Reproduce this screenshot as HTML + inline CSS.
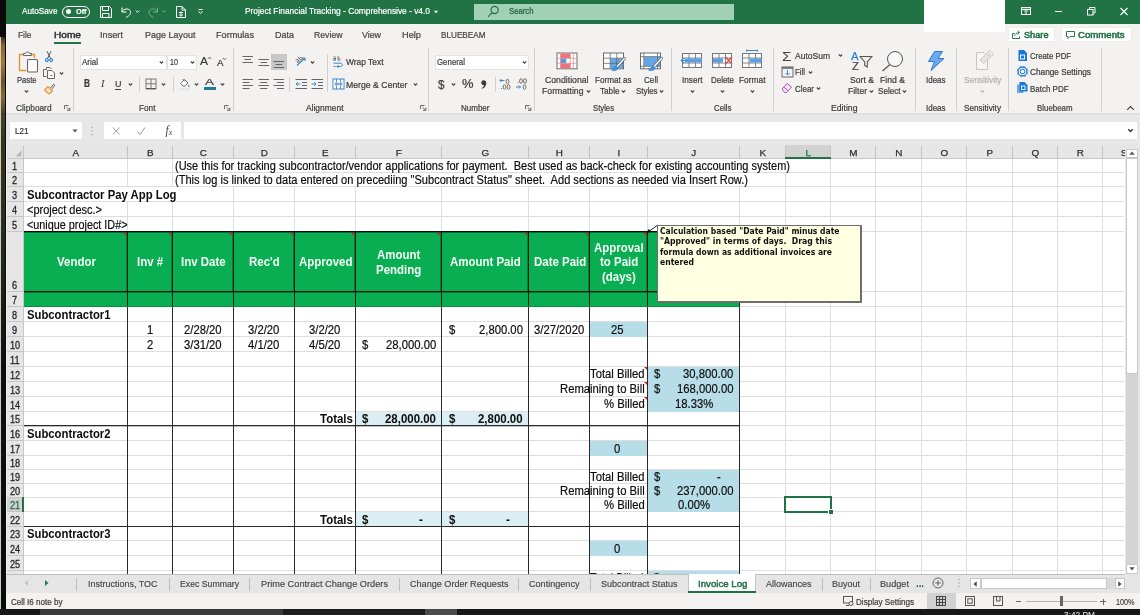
<!DOCTYPE html>
<html lang="en"><head><meta charset="utf-8"><title>Project Financial Tracking - Comprehensive - v4.0 - Excel</title>
<style>
html,body{margin:0;padding:0;}
body{width:1140px;height:615px;overflow:hidden;position:relative;background:#fff;font-family:"Liberation Sans",sans-serif;}
#root{position:absolute;left:0;top:0;width:1140px;height:615px;overflow:hidden;will-change:transform;}
#root div,#root svg{position:absolute;box-sizing:border-box;}
.t{position:absolute;white-space:pre;line-height:1;transform-origin:0 50%;}
</style></head>
<body>
<div id="root">
<!-- worksheet -->
<div style="left:6px;top:145px;width:1134px;height:430px;background:#fff;"></div>
<div style="left:6px;top:145px;width:1119px;height:14px;background:#e6e6e6;"></div>
<div style="left:6px;top:145px;width:18px;height:429px;background:#e6e6e6;"></div>
<div style="left:127px;top:159px;width:1px;height:415px;background:#dedede;"></div>
<div style="left:172px;top:159px;width:1px;height:415px;background:#dedede;"></div>
<div style="left:233px;top:159px;width:1px;height:415px;background:#dedede;"></div>
<div style="left:294px;top:159px;width:1px;height:415px;background:#dedede;"></div>
<div style="left:355px;top:159px;width:1px;height:415px;background:#dedede;"></div>
<div style="left:441px;top:159px;width:1px;height:415px;background:#dedede;"></div>
<div style="left:528px;top:159px;width:1px;height:415px;background:#dedede;"></div>
<div style="left:589px;top:159px;width:1px;height:415px;background:#dedede;"></div>
<div style="left:647px;top:159px;width:1px;height:415px;background:#dedede;"></div>
<div style="left:739px;top:159px;width:1px;height:415px;background:#dedede;"></div>
<div style="left:785px;top:159px;width:1px;height:415px;background:#dedede;"></div>
<div style="left:830px;top:159px;width:1px;height:415px;background:#dedede;"></div>
<div style="left:875px;top:159px;width:1px;height:415px;background:#dedede;"></div>
<div style="left:921px;top:159px;width:1px;height:415px;background:#dedede;"></div>
<div style="left:966px;top:159px;width:1px;height:415px;background:#dedede;"></div>
<div style="left:1012px;top:159px;width:1px;height:415px;background:#dedede;"></div>
<div style="left:1057px;top:159px;width:1px;height:415px;background:#dedede;"></div>
<div style="left:1102px;top:159px;width:1px;height:415px;background:#dedede;"></div>
<div style="left:24px;top:172px;width:1100px;height:1px;background:#dedede;"></div>
<div style="left:24px;top:186px;width:1100px;height:1px;background:#dedede;"></div>
<div style="left:24px;top:201px;width:1100px;height:1px;background:#dedede;"></div>
<div style="left:24px;top:216px;width:1100px;height:1px;background:#dedede;"></div>
<div style="left:24px;top:231px;width:1100px;height:1px;background:#dedede;"></div>
<div style="left:24px;top:291px;width:1100px;height:1px;background:#dedede;"></div>
<div style="left:24px;top:306px;width:1100px;height:1px;background:#dedede;"></div>
<div style="left:24px;top:321px;width:1100px;height:1px;background:#dedede;"></div>
<div style="left:24px;top:336px;width:1100px;height:1px;background:#dedede;"></div>
<div style="left:24px;top:351px;width:1100px;height:1px;background:#dedede;"></div>
<div style="left:24px;top:366px;width:1100px;height:1px;background:#dedede;"></div>
<div style="left:24px;top:381px;width:1100px;height:1px;background:#dedede;"></div>
<div style="left:24px;top:396px;width:1100px;height:1px;background:#dedede;"></div>
<div style="left:24px;top:411px;width:1100px;height:1px;background:#dedede;"></div>
<div style="left:24px;top:425px;width:1100px;height:1px;background:#dedede;"></div>
<div style="left:24px;top:440px;width:1100px;height:1px;background:#dedede;"></div>
<div style="left:24px;top:455px;width:1100px;height:1px;background:#dedede;"></div>
<div style="left:24px;top:469px;width:1100px;height:1px;background:#dedede;"></div>
<div style="left:24px;top:483px;width:1100px;height:1px;background:#dedede;"></div>
<div style="left:24px;top:497px;width:1100px;height:1px;background:#dedede;"></div>
<div style="left:24px;top:511px;width:1100px;height:1px;background:#dedede;"></div>
<div style="left:24px;top:526px;width:1100px;height:1px;background:#dedede;"></div>
<div style="left:24px;top:540px;width:1100px;height:1px;background:#dedede;"></div>
<div style="left:24px;top:555px;width:1100px;height:1px;background:#dedede;"></div>
<div style="left:24px;top:570px;width:1100px;height:1px;background:#dedede;"></div>
<div style="left:173px;top:159px;width:618px;height:13px;background:#fff;"></div>
<div style="left:173px;top:173px;width:576px;height:13px;background:#fff;"></div>
<div style="left:24px;top:187px;width:153px;height:14px;background:#fff;"></div>
<div style="left:127px;top:146px;width:1px;height:12px;background:#c2c2c2;"></div>
<div style="left:172px;top:146px;width:1px;height:12px;background:#c2c2c2;"></div>
<div style="left:233px;top:146px;width:1px;height:12px;background:#c2c2c2;"></div>
<div style="left:294px;top:146px;width:1px;height:12px;background:#c2c2c2;"></div>
<div style="left:355px;top:146px;width:1px;height:12px;background:#c2c2c2;"></div>
<div style="left:441px;top:146px;width:1px;height:12px;background:#c2c2c2;"></div>
<div style="left:528px;top:146px;width:1px;height:12px;background:#c2c2c2;"></div>
<div style="left:589px;top:146px;width:1px;height:12px;background:#c2c2c2;"></div>
<div style="left:647px;top:146px;width:1px;height:12px;background:#c2c2c2;"></div>
<div style="left:739px;top:146px;width:1px;height:12px;background:#c2c2c2;"></div>
<div style="left:785px;top:146px;width:1px;height:12px;background:#c2c2c2;"></div>
<div style="left:830px;top:146px;width:1px;height:12px;background:#c2c2c2;"></div>
<div style="left:875px;top:146px;width:1px;height:12px;background:#c2c2c2;"></div>
<div style="left:921px;top:146px;width:1px;height:12px;background:#c2c2c2;"></div>
<div style="left:966px;top:146px;width:1px;height:12px;background:#c2c2c2;"></div>
<div style="left:1012px;top:146px;width:1px;height:12px;background:#c2c2c2;"></div>
<div style="left:1057px;top:146px;width:1px;height:12px;background:#c2c2c2;"></div>
<div style="left:1102px;top:146px;width:1px;height:12px;background:#c2c2c2;"></div>
<div style="left:23px;top:146px;width:1px;height:428px;background:#c6c6c6;"></div>
<div style="left:6px;top:158px;width:1118px;height:1px;background:#c6c6c6;"></div>
<div style="left:6px;top:172px;width:17px;height:1px;background:#c6c6c6;"></div>
<div style="left:6px;top:186px;width:17px;height:1px;background:#c6c6c6;"></div>
<div style="left:6px;top:201px;width:17px;height:1px;background:#c6c6c6;"></div>
<div style="left:6px;top:216px;width:17px;height:1px;background:#c6c6c6;"></div>
<div style="left:6px;top:231px;width:17px;height:1px;background:#c6c6c6;"></div>
<div style="left:6px;top:291px;width:17px;height:1px;background:#c6c6c6;"></div>
<div style="left:6px;top:306px;width:17px;height:1px;background:#c6c6c6;"></div>
<div style="left:6px;top:321px;width:17px;height:1px;background:#c6c6c6;"></div>
<div style="left:6px;top:336px;width:17px;height:1px;background:#c6c6c6;"></div>
<div style="left:6px;top:351px;width:17px;height:1px;background:#c6c6c6;"></div>
<div style="left:6px;top:366px;width:17px;height:1px;background:#c6c6c6;"></div>
<div style="left:6px;top:381px;width:17px;height:1px;background:#c6c6c6;"></div>
<div style="left:6px;top:396px;width:17px;height:1px;background:#c6c6c6;"></div>
<div style="left:6px;top:411px;width:17px;height:1px;background:#c6c6c6;"></div>
<div style="left:6px;top:425px;width:17px;height:1px;background:#c6c6c6;"></div>
<div style="left:6px;top:440px;width:17px;height:1px;background:#c6c6c6;"></div>
<div style="left:6px;top:455px;width:17px;height:1px;background:#c6c6c6;"></div>
<div style="left:6px;top:469px;width:17px;height:1px;background:#c6c6c6;"></div>
<div style="left:6px;top:483px;width:17px;height:1px;background:#c6c6c6;"></div>
<div style="left:6px;top:497px;width:17px;height:1px;background:#c6c6c6;"></div>
<div style="left:6px;top:511px;width:17px;height:1px;background:#c6c6c6;"></div>
<div style="left:6px;top:526px;width:17px;height:1px;background:#c6c6c6;"></div>
<div style="left:6px;top:540px;width:17px;height:1px;background:#c6c6c6;"></div>
<div style="left:6px;top:555px;width:17px;height:1px;background:#c6c6c6;"></div>
<div style="left:6px;top:570px;width:17px;height:1px;background:#c6c6c6;"></div>
<svg style="left:15px;top:149.500px" width="7" height="7" viewBox="0 0 7 7"><path d="M6.500 0.500V6.500H0.500Z" fill="#b9b9b9"/></svg>
<div style="left:786px;top:145px;width:44px;height:13px;background:#d2d2d2;"></div>
<div style="left:785px;top:157px;width:46px;height:2px;background:#217346;"></div>
<div style="left:6px;top:498px;width:17px;height:13px;background:#d2d2d2;"></div>
<div style="left:22px;top:497px;width:2px;height:15px;background:#217346;"></div>
<span class="t" style="left:72.50px;top:147.82px;font-size:9.9px;font-weight:normal;color:#2e2e2e;font-family:'Liberation Sans',sans-serif;-webkit-text-stroke:.25px currentColor;">A</span>
<span class="t" style="left:147.00px;top:147.82px;font-size:9.9px;font-weight:normal;color:#2e2e2e;font-family:'Liberation Sans',sans-serif;-webkit-text-stroke:.25px currentColor;">B</span>
<span class="t" style="left:199.73px;top:147.82px;font-size:9.9px;font-weight:normal;color:#2e2e2e;font-family:'Liberation Sans',sans-serif;-webkit-text-stroke:.25px currentColor;">C</span>
<span class="t" style="left:260.73px;top:147.82px;font-size:9.9px;font-weight:normal;color:#2e2e2e;font-family:'Liberation Sans',sans-serif;-webkit-text-stroke:.25px currentColor;">D</span>
<span class="t" style="left:322.00px;top:147.82px;font-size:9.9px;font-weight:normal;color:#2e2e2e;font-family:'Liberation Sans',sans-serif;-webkit-text-stroke:.25px currentColor;">E</span>
<span class="t" style="left:395.78px;top:147.82px;font-size:9.9px;font-weight:normal;color:#2e2e2e;font-family:'Liberation Sans',sans-serif;-webkit-text-stroke:.25px currentColor;">F</span>
<span class="t" style="left:481.46px;top:147.82px;font-size:9.9px;font-weight:normal;color:#2e2e2e;font-family:'Liberation Sans',sans-serif;-webkit-text-stroke:.25px currentColor;">G</span>
<span class="t" style="left:555.73px;top:147.82px;font-size:9.9px;font-weight:normal;color:#2e2e2e;font-family:'Liberation Sans',sans-serif;-webkit-text-stroke:.25px currentColor;">H</span>
<span class="t" style="left:617.42px;top:147.82px;font-size:9.9px;font-weight:normal;color:#2e2e2e;font-family:'Liberation Sans',sans-serif;-webkit-text-stroke:.25px currentColor;">I</span>
<span class="t" style="left:691.33px;top:147.82px;font-size:9.9px;font-weight:normal;color:#2e2e2e;font-family:'Liberation Sans',sans-serif;-webkit-text-stroke:.25px currentColor;">J</span>
<span class="t" style="left:759.50px;top:147.82px;font-size:9.9px;font-weight:normal;color:#2e2e2e;font-family:'Liberation Sans',sans-serif;-webkit-text-stroke:.25px currentColor;">K</span>
<span class="t" style="left:805.55px;top:147.82px;font-size:9.9px;font-weight:normal;color:#217346;font-family:'Liberation Sans',sans-serif;-webkit-text-stroke:.25px currentColor;">L</span>
<span class="t" style="left:849.18px;top:147.82px;font-size:9.9px;font-weight:normal;color:#2e2e2e;font-family:'Liberation Sans',sans-serif;-webkit-text-stroke:.25px currentColor;">M</span>
<span class="t" style="left:895.23px;top:147.82px;font-size:9.9px;font-weight:normal;color:#2e2e2e;font-family:'Liberation Sans',sans-serif;-webkit-text-stroke:.25px currentColor;">N</span>
<span class="t" style="left:940.46px;top:147.82px;font-size:9.9px;font-weight:normal;color:#2e2e2e;font-family:'Liberation Sans',sans-serif;-webkit-text-stroke:.25px currentColor;">O</span>
<span class="t" style="left:986.50px;top:147.82px;font-size:9.9px;font-weight:normal;color:#2e2e2e;font-family:'Liberation Sans',sans-serif;-webkit-text-stroke:.25px currentColor;">P</span>
<span class="t" style="left:1031.46px;top:147.82px;font-size:9.9px;font-weight:normal;color:#2e2e2e;font-family:'Liberation Sans',sans-serif;-webkit-text-stroke:.25px currentColor;">Q</span>
<span class="t" style="left:1076.73px;top:147.82px;font-size:9.9px;font-weight:normal;color:#2e2e2e;font-family:'Liberation Sans',sans-serif;-webkit-text-stroke:.25px currentColor;">R</span>
<span class="t" style="left:1120.80px;top:147.82px;font-size:9.9px;font-weight:normal;color:#2e2e2e;font-family:'Liberation Sans',sans-serif;-webkit-text-stroke:.25px currentColor;">S</span>
<span class="t" style="left:12.05px;top:161.27px;font-size:10.9px;font-weight:normal;color:#262626;font-family:'Liberation Sans',sans-serif;transform:scaleX(0.8400);-webkit-text-stroke:.3px currentColor;">1</span>
<span class="t" style="left:12.05px;top:175.27px;font-size:10.9px;font-weight:normal;color:#262626;font-family:'Liberation Sans',sans-serif;transform:scaleX(0.8400);-webkit-text-stroke:.3px currentColor;">2</span>
<span class="t" style="left:12.05px;top:190.27px;font-size:10.9px;font-weight:normal;color:#262626;font-family:'Liberation Sans',sans-serif;transform:scaleX(0.8400);-webkit-text-stroke:.3px currentColor;">3</span>
<span class="t" style="left:12.05px;top:205.27px;font-size:10.9px;font-weight:normal;color:#262626;font-family:'Liberation Sans',sans-serif;transform:scaleX(0.8400);-webkit-text-stroke:.3px currentColor;">4</span>
<span class="t" style="left:12.05px;top:220.27px;font-size:10.9px;font-weight:normal;color:#262626;font-family:'Liberation Sans',sans-serif;transform:scaleX(0.8400);-webkit-text-stroke:.3px currentColor;">5</span>
<span class="t" style="left:12.05px;top:280.27px;font-size:10.9px;font-weight:normal;color:#262626;font-family:'Liberation Sans',sans-serif;transform:scaleX(0.8400);-webkit-text-stroke:.3px currentColor;">6</span>
<span class="t" style="left:12.05px;top:295.27px;font-size:10.9px;font-weight:normal;color:#262626;font-family:'Liberation Sans',sans-serif;transform:scaleX(0.8400);-webkit-text-stroke:.3px currentColor;">7</span>
<span class="t" style="left:12.05px;top:310.27px;font-size:10.9px;font-weight:normal;color:#262626;font-family:'Liberation Sans',sans-serif;transform:scaleX(0.8400);-webkit-text-stroke:.3px currentColor;">8</span>
<span class="t" style="left:12.05px;top:325.27px;font-size:10.9px;font-weight:normal;color:#262626;font-family:'Liberation Sans',sans-serif;transform:scaleX(0.8400);-webkit-text-stroke:.3px currentColor;">9</span>
<span class="t" style="left:9.51px;top:340.27px;font-size:10.9px;font-weight:normal;color:#262626;font-family:'Liberation Sans',sans-serif;transform:scaleX(0.8400);-webkit-text-stroke:.3px currentColor;">10</span>
<span class="t" style="left:9.85px;top:355.27px;font-size:10.9px;font-weight:normal;color:#262626;font-family:'Liberation Sans',sans-serif;transform:scaleX(0.8400);-webkit-text-stroke:.3px currentColor;">11</span>
<span class="t" style="left:9.51px;top:370.27px;font-size:10.9px;font-weight:normal;color:#262626;font-family:'Liberation Sans',sans-serif;transform:scaleX(0.8400);-webkit-text-stroke:.3px currentColor;">12</span>
<span class="t" style="left:9.51px;top:385.27px;font-size:10.9px;font-weight:normal;color:#262626;font-family:'Liberation Sans',sans-serif;transform:scaleX(0.8400);-webkit-text-stroke:.3px currentColor;">13</span>
<span class="t" style="left:9.51px;top:400.27px;font-size:10.9px;font-weight:normal;color:#262626;font-family:'Liberation Sans',sans-serif;transform:scaleX(0.8400);-webkit-text-stroke:.3px currentColor;">14</span>
<span class="t" style="left:9.51px;top:414.27px;font-size:10.9px;font-weight:normal;color:#262626;font-family:'Liberation Sans',sans-serif;transform:scaleX(0.8400);-webkit-text-stroke:.3px currentColor;">15</span>
<span class="t" style="left:9.51px;top:429.27px;font-size:10.9px;font-weight:normal;color:#262626;font-family:'Liberation Sans',sans-serif;transform:scaleX(0.8400);-webkit-text-stroke:.3px currentColor;">16</span>
<span class="t" style="left:9.51px;top:444.27px;font-size:10.9px;font-weight:normal;color:#262626;font-family:'Liberation Sans',sans-serif;transform:scaleX(0.8400);-webkit-text-stroke:.3px currentColor;">17</span>
<span class="t" style="left:9.51px;top:458.27px;font-size:10.9px;font-weight:normal;color:#262626;font-family:'Liberation Sans',sans-serif;transform:scaleX(0.8400);-webkit-text-stroke:.3px currentColor;">18</span>
<span class="t" style="left:9.51px;top:472.27px;font-size:10.9px;font-weight:normal;color:#262626;font-family:'Liberation Sans',sans-serif;transform:scaleX(0.8400);-webkit-text-stroke:.3px currentColor;">19</span>
<span class="t" style="left:9.51px;top:486.27px;font-size:10.9px;font-weight:normal;color:#262626;font-family:'Liberation Sans',sans-serif;transform:scaleX(0.8400);-webkit-text-stroke:.3px currentColor;">20</span>
<span class="t" style="left:9.51px;top:500.27px;font-size:10.9px;font-weight:normal;color:#217346;font-family:'Liberation Sans',sans-serif;transform:scaleX(0.8400);-webkit-text-stroke:.3px currentColor;">21</span>
<span class="t" style="left:9.51px;top:515.27px;font-size:10.9px;font-weight:normal;color:#262626;font-family:'Liberation Sans',sans-serif;transform:scaleX(0.8400);-webkit-text-stroke:.3px currentColor;">22</span>
<span class="t" style="left:9.51px;top:529.27px;font-size:10.9px;font-weight:normal;color:#262626;font-family:'Liberation Sans',sans-serif;transform:scaleX(0.8400);-webkit-text-stroke:.3px currentColor;">23</span>
<span class="t" style="left:9.51px;top:544.27px;font-size:10.9px;font-weight:normal;color:#262626;font-family:'Liberation Sans',sans-serif;transform:scaleX(0.8400);-webkit-text-stroke:.3px currentColor;">24</span>
<span class="t" style="left:9.51px;top:559.27px;font-size:10.9px;font-weight:normal;color:#262626;font-family:'Liberation Sans',sans-serif;transform:scaleX(0.8400);-webkit-text-stroke:.3px currentColor;">25</span>
<div style="left:24px;top:232px;width:716px;height:75px;background:#0aae52;"></div>
<div style="left:590px;top:322px;width:57px;height:15px;background:#b7dee8;"></div>
<div style="left:648px;top:367px;width:91px;height:45px;background:#b7dee8;"></div>
<div style="left:356px;top:412px;width:172px;height:14px;background:#daeef3;"></div>
<div style="left:590px;top:441px;width:57px;height:15px;background:#b7dee8;"></div>
<div style="left:648px;top:470px;width:91px;height:42px;background:#b7dee8;"></div>
<div style="left:356px;top:512px;width:172px;height:15px;background:#daeef3;"></div>
<div style="left:590px;top:541px;width:57px;height:15px;background:#b7dee8;"></div>
<div style="left:648px;top:571px;width:91px;height:4px;background:#b7dee8;"></div>
<div style="left:127px;top:232px;width:1px;height:75px;background:#0c1a10;"></div>
<div style="left:127px;top:307px;width:1px;height:267px;background:#2a2a2a;"></div>
<div style="left:126px;top:232px;width:1px;height:60px;background:rgba(0,40,10,.35);"></div>
<div style="left:172px;top:232px;width:1px;height:75px;background:#0c1a10;"></div>
<div style="left:172px;top:307px;width:1px;height:267px;background:#2a2a2a;"></div>
<div style="left:171px;top:232px;width:1px;height:60px;background:rgba(0,40,10,.35);"></div>
<div style="left:233px;top:232px;width:1px;height:75px;background:#0c1a10;"></div>
<div style="left:233px;top:307px;width:1px;height:267px;background:#2a2a2a;"></div>
<div style="left:232px;top:232px;width:1px;height:60px;background:rgba(0,40,10,.35);"></div>
<div style="left:294px;top:232px;width:1px;height:75px;background:#0c1a10;"></div>
<div style="left:294px;top:307px;width:1px;height:267px;background:#2a2a2a;"></div>
<div style="left:293px;top:232px;width:1px;height:60px;background:rgba(0,40,10,.35);"></div>
<div style="left:355px;top:232px;width:1px;height:75px;background:#0c1a10;"></div>
<div style="left:355px;top:307px;width:1px;height:267px;background:#2a2a2a;"></div>
<div style="left:354px;top:232px;width:1px;height:60px;background:rgba(0,40,10,.35);"></div>
<div style="left:441px;top:232px;width:1px;height:75px;background:#0c1a10;"></div>
<div style="left:441px;top:307px;width:1px;height:267px;background:#2a2a2a;"></div>
<div style="left:440px;top:232px;width:1px;height:60px;background:rgba(0,40,10,.35);"></div>
<div style="left:528px;top:232px;width:1px;height:75px;background:#0c1a10;"></div>
<div style="left:528px;top:307px;width:1px;height:267px;background:#2a2a2a;"></div>
<div style="left:527px;top:232px;width:1px;height:60px;background:rgba(0,40,10,.35);"></div>
<div style="left:589px;top:232px;width:1px;height:75px;background:#0c1a10;"></div>
<div style="left:589px;top:307px;width:1px;height:267px;background:#2a2a2a;"></div>
<div style="left:588px;top:232px;width:1px;height:60px;background:rgba(0,40,10,.35);"></div>
<div style="left:647px;top:232px;width:1px;height:75px;background:#0c1a10;"></div>
<div style="left:647px;top:307px;width:1px;height:267px;background:#2a2a2a;"></div>
<div style="left:646px;top:232px;width:1px;height:60px;background:rgba(0,40,10,.35);"></div>
<div style="left:739px;top:232px;width:1px;height:75px;background:#0c1a10;"></div>
<div style="left:739px;top:307px;width:1px;height:267px;background:#2a2a2a;"></div>
<div style="left:738px;top:232px;width:1px;height:60px;background:rgba(0,40,10,.35);"></div>
<div style="left:24px;top:231px;width:716px;height:1px;background:#0c0c0c;"></div>
<div style="left:24px;top:232px;width:716px;height:1px;background:rgba(0,30,10,.45);"></div>
<div style="left:24px;top:291px;width:716px;height:1px;background:#0c1a10;"></div>
<div style="left:24px;top:292px;width:716px;height:1px;background:rgba(0,30,10,.4);"></div>
<div style="left:24px;top:306px;width:716px;height:1px;background:#0b8f45;"></div>
<div style="left:24px;top:425px;width:716px;height:1px;background:#2a2a2a;"></div>
<div style="left:24px;top:426px;width:716px;height:1px;background:rgba(0,0,0,.25);"></div>
<div style="left:24px;top:526px;width:716px;height:1px;background:#2a2a2a;"></div>
<svg style="left:122.5px;top:233px" width="3.5" height="3.5" viewBox="0 0 3.5 3.5"><path d="M0 0H3.5V3.5Z" fill="#e02020"/></svg>
<svg style="left:167.5px;top:233px" width="3.5" height="3.5" viewBox="0 0 3.5 3.5"><path d="M0 0H3.5V3.5Z" fill="#e02020"/></svg>
<svg style="left:228.5px;top:233px" width="3.5" height="3.5" viewBox="0 0 3.5 3.5"><path d="M0 0H3.5V3.5Z" fill="#e02020"/></svg>
<svg style="left:289.5px;top:233px" width="3.5" height="3.5" viewBox="0 0 3.5 3.5"><path d="M0 0H3.5V3.5Z" fill="#e02020"/></svg>
<svg style="left:350.5px;top:233px" width="3.5" height="3.5" viewBox="0 0 3.5 3.5"><path d="M0 0H3.5V3.5Z" fill="#e02020"/></svg>
<svg style="left:436.5px;top:233px" width="3.5" height="3.5" viewBox="0 0 3.5 3.5"><path d="M0 0H3.5V3.5Z" fill="#e02020"/></svg>
<svg style="left:523.5px;top:233px" width="3.5" height="3.5" viewBox="0 0 3.5 3.5"><path d="M0 0H3.5V3.5Z" fill="#e02020"/></svg>
<svg style="left:584.5px;top:233px" width="3.5" height="3.5" viewBox="0 0 3.5 3.5"><path d="M0 0H3.5V3.5Z" fill="#e02020"/></svg>
<svg style="left:642.5px;top:233px" width="3.5" height="3.5" viewBox="0 0 3.5 3.5"><path d="M0 0H3.5V3.5Z" fill="#e02020"/></svg>
<svg style="left:644px;top:367px" width="3" height="3" viewBox="0 0 3 3"><path d="M0 0H3V3Z" fill="#e02020"/></svg>
<svg style="left:644px;top:382px" width="3" height="3" viewBox="0 0 3 3"><path d="M0 0H3V3Z" fill="#e02020"/></svg>
<svg style="left:644px;top:397px" width="3" height="3" viewBox="0 0 3 3"><path d="M0 0H3V3Z" fill="#e02020"/></svg>
<span class="t" style="left:56.57px;top:256.34px;font-size:12px;font-weight:bold;color:#f4fff6;font-family:'Liberation Sans',sans-serif;transform:scaleX(0.9550);">Vendor</span>
<span class="t" style="left:137.44px;top:256.34px;font-size:12px;font-weight:bold;color:#f4fff6;font-family:'Liberation Sans',sans-serif;transform:scaleX(0.9550);">Inv #</span>
<span class="t" style="left:181.21px;top:256.34px;font-size:12px;font-weight:bold;color:#f4fff6;font-family:'Liberation Sans',sans-serif;transform:scaleX(0.9550);">Inv Date</span>
<span class="t" style="left:249.12px;top:256.34px;font-size:12px;font-weight:bold;color:#f4fff6;font-family:'Liberation Sans',sans-serif;transform:scaleX(0.9550);">Rec&#x27;d</span>
<span class="t" style="left:298.75px;top:256.34px;font-size:12px;font-weight:bold;color:#f4fff6;font-family:'Liberation Sans',sans-serif;transform:scaleX(0.9550);">Approved</span>
<span class="t" style="left:377.36px;top:248.84px;font-size:12px;font-weight:bold;color:#f4fff6;font-family:'Liberation Sans',sans-serif;transform:scaleX(0.9550);">Amount</span>
<span class="t" style="left:376.39px;top:263.84px;font-size:12px;font-weight:bold;color:#f4fff6;font-family:'Liberation Sans',sans-serif;transform:scaleX(0.9550);">Pending</span>
<span class="t" style="left:450.17px;top:256.34px;font-size:12px;font-weight:bold;color:#f4fff6;font-family:'Liberation Sans',sans-serif;transform:scaleX(0.9550);">Amount Paid</span>
<span class="t" style="left:534.39px;top:256.34px;font-size:12px;font-weight:bold;color:#f4fff6;font-family:'Liberation Sans',sans-serif;transform:scaleX(0.9550);">Date Paid</span>
<span class="t" style="left:594.16px;top:241.84px;font-size:12px;font-weight:bold;color:#f4fff6;font-family:'Liberation Sans',sans-serif;transform:scaleX(0.9550);">Approval</span>
<span class="t" style="left:599.89px;top:256.34px;font-size:12px;font-weight:bold;color:#f4fff6;font-family:'Liberation Sans',sans-serif;transform:scaleX(0.9550);">to Paid</span>
<span class="t" style="left:602.12px;top:270.84px;font-size:12px;font-weight:bold;color:#f4fff6;font-family:'Liberation Sans',sans-serif;transform:scaleX(0.9550);">(days)</span>
<span class="t" style="left:175.00px;top:159.54px;font-size:12px;font-weight:normal;color:#0c0c0c;font-family:'Liberation Sans',sans-serif;transform:scaleX(0.9166);-webkit-text-stroke:.18px currentColor;">(Use this for tracking subcontractor/vendor applications for payment.  Best used as back-check for existing accounting system)</span>
<span class="t" style="left:175.00px;top:173.54px;font-size:12px;font-weight:normal;color:#0c0c0c;font-family:'Liberation Sans',sans-serif;transform:scaleX(0.9219);-webkit-text-stroke:.18px currentColor;">(This log is linked to data entered on precediing &quot;Subcontract Status&quot; sheet.  Add sections as needed via Insert Row.)</span>
<span class="t" style="left:27.00px;top:188.54px;font-size:12px;font-weight:bold;color:#0c0c0c;font-family:'Liberation Sans',sans-serif;transform:scaleX(0.9448);">Subcontractor Pay App Log</span>
<span class="t" style="left:27.00px;top:203.54px;font-size:12px;font-weight:normal;color:#0c0c0c;font-family:'Liberation Sans',sans-serif;transform:scaleX(0.9139);-webkit-text-stroke:.18px currentColor;">&lt;project desc.&gt;</span>
<span class="t" style="left:27.00px;top:218.54px;font-size:12px;font-weight:normal;color:#0c0c0c;font-family:'Liberation Sans',sans-serif;transform:scaleX(0.9020);-webkit-text-stroke:.18px currentColor;">&lt;unique project ID#&gt;</span>
<span class="t" style="left:27.00px;top:308.54px;font-size:12px;font-weight:bold;color:#0c0c0c;font-family:'Liberation Sans',sans-serif;transform:scaleX(0.9415);">Subcontractor1</span>
<span class="t" style="left:27.00px;top:427.54px;font-size:12px;font-weight:bold;color:#0c0c0c;font-family:'Liberation Sans',sans-serif;transform:scaleX(0.9415);">Subcontractor2</span>
<span class="t" style="left:27.00px;top:527.54px;font-size:12px;font-weight:bold;color:#0c0c0c;font-family:'Liberation Sans',sans-serif;transform:scaleX(0.9415);">Subcontractor3</span>
<span class="t" style="left:146.86px;top:323.54px;font-size:12px;font-weight:normal;color:#0c0c0c;font-family:'Liberation Sans',sans-serif;transform:scaleX(0.9400);-webkit-text-stroke:.18px currentColor;">1</span>
<span class="t" style="left:146.86px;top:338.54px;font-size:12px;font-weight:normal;color:#0c0c0c;font-family:'Liberation Sans',sans-serif;transform:scaleX(0.9400);-webkit-text-stroke:.18px currentColor;">2</span>
<span class="t" style="left:184.18px;top:323.54px;font-size:12px;font-weight:normal;color:#0c0c0c;font-family:'Liberation Sans',sans-serif;transform:scaleX(0.9400);-webkit-text-stroke:.18px currentColor;">2/28/20</span>
<span class="t" style="left:184.18px;top:338.54px;font-size:12px;font-weight:normal;color:#0c0c0c;font-family:'Liberation Sans',sans-serif;transform:scaleX(0.9400);-webkit-text-stroke:.18px currentColor;">3/31/20</span>
<span class="t" style="left:248.31px;top:323.54px;font-size:12px;font-weight:normal;color:#0c0c0c;font-family:'Liberation Sans',sans-serif;transform:scaleX(0.9400);-webkit-text-stroke:.18px currentColor;">3/2/20</span>
<span class="t" style="left:248.31px;top:338.54px;font-size:12px;font-weight:normal;color:#0c0c0c;font-family:'Liberation Sans',sans-serif;transform:scaleX(0.9400);-webkit-text-stroke:.18px currentColor;">4/1/20</span>
<span class="t" style="left:309.31px;top:323.54px;font-size:12px;font-weight:normal;color:#0c0c0c;font-family:'Liberation Sans',sans-serif;transform:scaleX(0.9400);-webkit-text-stroke:.18px currentColor;">3/2/20</span>
<span class="t" style="left:309.31px;top:338.54px;font-size:12px;font-weight:normal;color:#0c0c0c;font-family:'Liberation Sans',sans-serif;transform:scaleX(0.9400);-webkit-text-stroke:.18px currentColor;">4/5/20</span>
<span class="t" style="left:449.00px;top:323.54px;font-size:12px;font-weight:normal;color:#0c0c0c;font-family:'Liberation Sans',sans-serif;transform:scaleX(0.9400);-webkit-text-stroke:.18px currentColor;">$</span>
<span class="t" style="left:478.58px;top:323.54px;font-size:12px;font-weight:normal;color:#0c0c0c;font-family:'Liberation Sans',sans-serif;transform:scaleX(0.9400);-webkit-text-stroke:.18px currentColor;">2,800.00</span>
<span class="t" style="left:534.41px;top:323.54px;font-size:12px;font-weight:normal;color:#0c0c0c;font-family:'Liberation Sans',sans-serif;transform:scaleX(0.9400);-webkit-text-stroke:.18px currentColor;">3/27/2020</span>
<span class="t" style="left:610.72px;top:323.54px;font-size:12px;font-weight:normal;color:#0c0c0c;font-family:'Liberation Sans',sans-serif;transform:scaleX(0.9400);-webkit-text-stroke:.18px currentColor;">25</span>
<span class="t" style="left:362.00px;top:338.54px;font-size:12px;font-weight:normal;color:#0c0c0c;font-family:'Liberation Sans',sans-serif;transform:scaleX(0.9400);-webkit-text-stroke:.18px currentColor;">$</span>
<span class="t" style="left:385.81px;top:338.54px;font-size:12px;font-weight:normal;color:#0c0c0c;font-family:'Liberation Sans',sans-serif;transform:scaleX(0.9400);-webkit-text-stroke:.18px currentColor;">28,000.00</span>
<span class="t" style="left:590.45px;top:367.84px;font-size:12px;font-weight:normal;color:#0c0c0c;font-family:'Liberation Sans',sans-serif;transform:scaleX(0.9400);-webkit-text-stroke:.18px currentColor;">Total Billed</span>
<span class="t" style="left:560.36px;top:382.84px;font-size:12px;font-weight:normal;color:#0c0c0c;font-family:'Liberation Sans',sans-serif;transform:scaleX(0.9400);-webkit-text-stroke:.18px currentColor;">Remaining to Bill</span>
<span class="t" style="left:604.24px;top:397.84px;font-size:12px;font-weight:normal;color:#0c0c0c;font-family:'Liberation Sans',sans-serif;transform:scaleX(0.9400);-webkit-text-stroke:.18px currentColor;">% Billed</span>
<span class="t" style="left:653.50px;top:367.84px;font-size:12px;font-weight:normal;color:#0c0c0c;font-family:'Liberation Sans',sans-serif;transform:scaleX(0.9400);-webkit-text-stroke:.18px currentColor;">$</span>
<span class="t" style="left:653.50px;top:382.84px;font-size:12px;font-weight:normal;color:#0c0c0c;font-family:'Liberation Sans',sans-serif;transform:scaleX(0.9400);-webkit-text-stroke:.18px currentColor;">$</span>
<span class="t" style="left:590.45px;top:470.54px;font-size:12px;font-weight:normal;color:#0c0c0c;font-family:'Liberation Sans',sans-serif;transform:scaleX(0.9400);-webkit-text-stroke:.18px currentColor;">Total Billed</span>
<span class="t" style="left:560.36px;top:484.54px;font-size:12px;font-weight:normal;color:#0c0c0c;font-family:'Liberation Sans',sans-serif;transform:scaleX(0.9400);-webkit-text-stroke:.18px currentColor;">Remaining to Bill</span>
<span class="t" style="left:604.24px;top:498.54px;font-size:12px;font-weight:normal;color:#0c0c0c;font-family:'Liberation Sans',sans-serif;transform:scaleX(0.9400);-webkit-text-stroke:.18px currentColor;">% Billed</span>
<span class="t" style="left:653.50px;top:470.54px;font-size:12px;font-weight:normal;color:#0c0c0c;font-family:'Liberation Sans',sans-serif;transform:scaleX(0.9400);-webkit-text-stroke:.18px currentColor;">$</span>
<span class="t" style="left:653.50px;top:484.54px;font-size:12px;font-weight:normal;color:#0c0c0c;font-family:'Liberation Sans',sans-serif;transform:scaleX(0.9400);-webkit-text-stroke:.18px currentColor;">$</span>
<span class="t" style="left:683.31px;top:367.84px;font-size:12px;font-weight:normal;color:#0c0c0c;font-family:'Liberation Sans',sans-serif;transform:scaleX(0.9400);-webkit-text-stroke:.18px currentColor;">30,800.00</span>
<span class="t" style="left:677.04px;top:382.84px;font-size:12px;font-weight:normal;color:#0c0c0c;font-family:'Liberation Sans',sans-serif;transform:scaleX(0.9400);-webkit-text-stroke:.18px currentColor;">168,000.00</span>
<span class="t" style="left:674.87px;top:397.84px;font-size:12px;font-weight:normal;color:#0c0c0c;font-family:'Liberation Sans',sans-serif;transform:scaleX(0.9400);-webkit-text-stroke:.18px currentColor;">18.33%</span>
<span class="t" style="left:716.74px;top:470.54px;font-size:12px;font-weight:normal;color:#0c0c0c;font-family:'Liberation Sans',sans-serif;transform:scaleX(0.9400);-webkit-text-stroke:.18px currentColor;">-</span>
<span class="t" style="left:677.04px;top:484.54px;font-size:12px;font-weight:normal;color:#0c0c0c;font-family:'Liberation Sans',sans-serif;transform:scaleX(0.9400);-webkit-text-stroke:.18px currentColor;">237,000.00</span>
<span class="t" style="left:678.01px;top:498.54px;font-size:12px;font-weight:normal;color:#0c0c0c;font-family:'Liberation Sans',sans-serif;transform:scaleX(0.9400);-webkit-text-stroke:.18px currentColor;">0.00%</span>
<span class="t" style="left:319.60px;top:412.54px;font-size:12px;font-weight:bold;color:#0c0c0c;font-family:'Liberation Sans',sans-serif;transform:scaleX(0.9550);">Totals</span>
<span class="t" style="left:362.00px;top:412.54px;font-size:12px;font-weight:bold;color:#0c0c0c;font-family:'Liberation Sans',sans-serif;transform:scaleX(0.9550);">$</span>
<span class="t" style="left:449.00px;top:412.54px;font-size:12px;font-weight:bold;color:#0c0c0c;font-family:'Liberation Sans',sans-serif;transform:scaleX(0.9550);">$</span>
<span class="t" style="left:319.60px;top:513.54px;font-size:12px;font-weight:bold;color:#0c0c0c;font-family:'Liberation Sans',sans-serif;transform:scaleX(0.9550);">Totals</span>
<span class="t" style="left:362.00px;top:513.54px;font-size:12px;font-weight:bold;color:#0c0c0c;font-family:'Liberation Sans',sans-serif;transform:scaleX(0.9550);">$</span>
<span class="t" style="left:449.00px;top:513.54px;font-size:12px;font-weight:bold;color:#0c0c0c;font-family:'Liberation Sans',sans-serif;transform:scaleX(0.9550);">$</span>
<span class="t" style="left:385.01px;top:412.54px;font-size:12px;font-weight:bold;color:#0c0c0c;font-family:'Liberation Sans',sans-serif;transform:scaleX(0.9550);">28,000.00</span>
<span class="t" style="left:477.88px;top:412.54px;font-size:12px;font-weight:bold;color:#0c0c0c;font-family:'Liberation Sans',sans-serif;transform:scaleX(0.9550);">2,800.00</span>
<span class="t" style="left:419.18px;top:513.54px;font-size:12px;font-weight:bold;color:#0c0c0c;font-family:'Liberation Sans',sans-serif;transform:scaleX(0.9550);">-</span>
<span class="t" style="left:506.18px;top:513.54px;font-size:12px;font-weight:bold;color:#0c0c0c;font-family:'Liberation Sans',sans-serif;transform:scaleX(0.9550);">-</span>
<span class="t" style="left:613.86px;top:442.54px;font-size:12px;font-weight:normal;color:#0c0c0c;font-family:'Liberation Sans',sans-serif;transform:scaleX(0.9400);-webkit-text-stroke:.18px currentColor;">0</span>
<span class="t" style="left:613.86px;top:542.54px;font-size:12px;font-weight:normal;color:#0c0c0c;font-family:'Liberation Sans',sans-serif;transform:scaleX(0.9400);-webkit-text-stroke:.18px currentColor;">0</span>
<div style="left:24px;top:571px;width:716px;height:4px;overflow:hidden;background:transparent"><span class="t" style="left:565.5px;top:0.500px;font-size:12px;color:#111;transform:scaleX(.918)">Total Billed</span><span class="t" style="left:629.5px;top:1.2px;font-size:11.4px;color:#111">$</span></div>
<div style="left:784px;top:496px;width:48px;height:17px;border:2px solid #217346;"></div>
<div style="left:828px;top:509px;width:5px;height:5px;background:#217346;border-left:1px solid #fff;border-top:1px solid #fff;"></div>
<svg style="left:640px;top:220px" width="24" height="16" viewBox="0 0 24 16"><path d="M17.5 5.2 L8 12" stroke="#222" stroke-width="1" fill="none"/><path d="M6.2 13.2 L11.2 11.6 L8.6 9 Z" fill="#111"/></svg>
<div style="left:657px;top:225px;width:205px;height:78px;background:#ffffe1;border:1px solid #6e6e6e;border-right:2px solid #6e6e6e;border-bottom:2px solid #6e6e6e;border-radius:1px"></div>
<span class="t" style="left:659.50px;top:226.52px;font-size:8.6px;font-weight:bold;color:#111;font-family:'DejaVu Sans','Liberation Sans',sans-serif;transform:scaleX(0.8885);">Calculation based &quot;Date Paid&quot; minus date</span>
<span class="t" style="left:659.50px;top:237.07px;font-size:8.6px;font-weight:bold;color:#111;font-family:'DejaVu Sans','Liberation Sans',sans-serif;transform:scaleX(0.9014);">&quot;Approved&quot; in terms of days.  Drag this</span>
<span class="t" style="left:659.50px;top:247.62px;font-size:8.6px;font-weight:bold;color:#111;font-family:'DejaVu Sans','Liberation Sans',sans-serif;transform:scaleX(0.8867);">formula down as additional invoices are</span>
<span class="t" style="left:659.50px;top:258.17px;font-size:8.6px;font-weight:bold;color:#111;font-family:'DejaVu Sans','Liberation Sans',sans-serif;transform:scaleX(0.8922);">entered</span>
<!-- desktop strip visible left of the window -->
<div style="left:0px;top:0px;width:7px;height:615px;background:#0a0a0a;"></div>
<div style="left:0px;top:37px;width:1.2px;height:572px;background:#c9ced3;"></div>
<div style="left:1.2px;top:37px;width:4.3px;height:572px;background:#1a1a12;background:linear-gradient(180deg,#3a2c14 0,#8a6424 8px,#a87a2e 25px,#6e5220 45px,#8a6a2a 60px,#4a4420 76px,#2f3a1a 100px,#3a3018 130px,#27301a 190px,#1a2012 260px,#0e120c 330px,#080a08 572px);"></div>
<div style="left:5.5px;top:24px;width:1.5px;height:585px;background:#f1f1f1;"></div>
<!-- title bar -->
<div style="left:6px;top:0px;width:1134px;height:24px;background:#217346;"></div>
<div style="left:6px;top:24px;width:1134px;height:22px;background:#f3f2f1;"></div>
<div style="left:924px;top:0px;width:81px;height:32px;background:#fff;"></div>
<span class="t" style="left:22.00px;top:7.15px;font-size:8.8px;font-weight:normal;color:#fff;font-family:'Liberation Sans',sans-serif;transform:scaleX(0.9304);-webkit-text-stroke:.2px currentColor;">AutoSave</span>
<div style="left:62px;top:5.5px;width:28px;height:12px;border:1px solid #fff;border-radius:6px"></div>
<div style="left:65.5px;top:9px;width:5px;height:5px;border-radius:50%;background:#fff"></div>
<span class="t" style="left:76.00px;top:7.77px;font-size:7.6px;font-weight:bold;color:#fff;font-family:'Liberation Sans',sans-serif;transform:scaleX(0.9573);-webkit-text-stroke:.2px currentColor;">Off</span>
<svg style="left:99px;top:5px" width="100" height="14" viewBox="0 0 100 14" fill="none" stroke="#fff" stroke-width="1">
<path d="M1.5 1.5H10.5L12.5 3.5V12.5H1.5Z"/><path d="M3.5 1.5V5.5H9.5V1.5"/><path d="M3.5 12.5V8.5H10V12.5"/>
<path d="M23 2.5V7H27.5" /><path d="M23 7C25 3.5 29 3 31 5.5C32.5 8 31 10.5 27 12.5"/>
<path d="M36.700 5.500L38.500 7.300L40.300 5.500" stroke-width="1"/>
<g stroke="#7fae93"><path d="M58.5 2.5V7H54" /><path d="M58.5 7C56.5 3.5 52.5 3 50.5 5.5C49 8 50.5 10.5 54.5 12.5"/><path d="M63.200 5.500L65 7.300L66.800 5.500"/></g>
<path d="M77.5 1.5H83L86.5 5V12.5H77.5Z"/><path d="M83 1.5V5H86.5"/><path d="M80 7.5H84M80 10H84M82 6.5V11.5" stroke-width=".9"/>
</svg>
<svg style="left:196.500px;top:8px" width="7" height="7" viewBox="0 0 7 7" fill="none" stroke="#fff" stroke-width="1"><path d="M1.500 1.500H5.500"/><path d="M1.500 3.500L3.500 5.300L5.500 3.500"/></svg>
<span class="t" style="left:244.50px;top:7.15px;font-size:8.8px;font-weight:normal;color:#fff;font-family:'Liberation Sans',sans-serif;transform:scaleX(0.9507);-webkit-text-stroke:.2px currentColor;">Project Financial Tracking - Comprehensive - v4.0</span>
<svg style="left:433px;top:9.5px" width="6" height="4" viewBox="0 0 6 4"><path d="M0.800 0.700H5.200L3 3.300Z" fill="#fff"/></svg>
<div style="left:474px;top:4px;width:260px;height:16px;background:#a0d0b5;"></div>
<svg style="left:487px;top:5px" width="13" height="13" viewBox="0 0 13 13" fill="none" stroke="#1f6b42" stroke-width="1.1"><circle cx="7.6" cy="5" r="3.6"/><path d="M5 7.6L1 12"/></svg>
<span class="t" style="left:509.00px;top:7.15px;font-size:8.8px;font-weight:normal;color:#1d5e3a;font-family:'Liberation Sans',sans-serif;transform:scaleX(0.8789);-webkit-text-stroke:.2px currentColor;">Search</span>
<svg style="left:1018px;top:5px" width="116" height="14" viewBox="0 0 116 14" fill="none" stroke="#fff" stroke-width="1">
<rect x="3.5" y="2.5" width="9" height="7"/><path d="M3.5 4.5H12.5" stroke-width="1.4"/><path d="M8 9V5.6M6.3 7.2L8 5.5L9.7 7.2" stroke-width=".9"/>
<path d="M37 6.5H44"/>
<rect x="69.500" y="4.5" width="5.5" height="5.500"/><path d="M71.500 4.5V2.5H77V8H75"/>
<path d="M102.500 3L109.500 10M109.500 3L102.500 10" stroke-width="1.1"/>
</svg>
<!-- ribbon tabs -->
<span class="t" style="left:17.50px;top:30.75px;font-size:8.8px;font-weight:normal;color:#444;font-family:'Liberation Sans',sans-serif;transform:scaleX(0.9515);-webkit-text-stroke:.2px currentColor;">File</span>
<span class="t" style="left:54.00px;top:30.75px;font-size:8.8px;font-weight:normal;color:#2b2b2b;font-family:'Liberation Sans',sans-serif;transform:scaleX(1.1505);-webkit-text-stroke:.4px currentColor;">Home</span>
<div style="left:54px;top:42px;width:27px;height:2px;background:#217346;"></div>
<span class="t" style="left:100.00px;top:30.75px;font-size:8.8px;font-weight:normal;color:#444;font-family:'Liberation Sans',sans-serif;transform:scaleX(1.0447);-webkit-text-stroke:.2px currentColor;">Insert</span>
<span class="t" style="left:144.50px;top:30.75px;font-size:8.8px;font-weight:normal;color:#444;font-family:'Liberation Sans',sans-serif;transform:scaleX(1.0221);-webkit-text-stroke:.2px currentColor;">Page Layout</span>
<span class="t" style="left:216.00px;top:30.75px;font-size:8.8px;font-weight:normal;color:#444;font-family:'Liberation Sans',sans-serif;transform:scaleX(1.0362);-webkit-text-stroke:.2px currentColor;">Formulas</span>
<span class="t" style="left:274.50px;top:30.75px;font-size:8.8px;font-weight:normal;color:#444;font-family:'Liberation Sans',sans-serif;transform:scaleX(1.0218);-webkit-text-stroke:.2px currentColor;">Data</span>
<span class="t" style="left:314.00px;top:30.75px;font-size:8.8px;font-weight:normal;color:#444;font-family:'Liberation Sans',sans-serif;transform:scaleX(0.9881);-webkit-text-stroke:.2px currentColor;">Review</span>
<span class="t" style="left:362.00px;top:30.75px;font-size:8.8px;font-weight:normal;color:#444;font-family:'Liberation Sans',sans-serif;transform:scaleX(1.0041);-webkit-text-stroke:.2px currentColor;">View</span>
<span class="t" style="left:401.50px;top:30.75px;font-size:8.8px;font-weight:normal;color:#444;font-family:'Liberation Sans',sans-serif;transform:scaleX(1.0501);-webkit-text-stroke:.2px currentColor;">Help</span>
<span class="t" style="left:441.00px;top:30.75px;font-size:8.8px;font-weight:normal;color:#444;font-family:'Liberation Sans',sans-serif;transform:scaleX(0.9286);-webkit-text-stroke:.2px currentColor;">BLUEBEAM</span>
<div style="left:1007.5px;top:27px;width:47px;height:15px;background:#fff;border:1px solid #ededed;border-radius:1px"></div>
<div style="left:1061px;top:27px;width:70.500px;height:15px;background:#fff;border:1px solid #ededed;border-radius:1px"></div>
<svg style="left:1011px;top:29px" width="11" height="11" viewBox="0 0 11 11" fill="none" stroke="#2a7a4f" stroke-width="1"><path d="M3.5 4.5H1.500V9.5H8.5V7.5"/><path d="M3.5 7C4 4.8 5.500 3.700 8 3.700M6.5 1.800L8.6 3.700L6.5 5.600"/></svg>
<svg style="left:1065px;top:30px" width="11" height="10" viewBox="0 0 11 10" fill="none" stroke="#2a7a4f" stroke-width="1"><path d="M1.500 1.500H9.500V6.500H5L3 8.5V6.500H1.500Z"/></svg>
<span class="t" style="left:1024.00px;top:30.75px;font-size:8.8px;font-weight:normal;color:#1f6e43;font-family:'Liberation Sans',sans-serif;transform:scaleX(1.0432);-webkit-text-stroke:.5px currentColor;">Share</span>
<span class="t" style="left:1078.00px;top:30.75px;font-size:8.8px;font-weight:normal;color:#1f6e43;font-family:'Liberation Sans',sans-serif;transform:scaleX(1.0933);-webkit-text-stroke:.5px currentColor;">Comments</span>
<div style="left:6px;top:46px;width:1134px;height:67px;background:#f3f2f1;"></div>
<div style="left:6px;top:113px;width:1134px;height:32px;background:#e7e7e7;"></div>
<div style="left:6px;top:113px;width:1134px;height:1px;background:#dcdcdc;"></div>
<div style="left:6px;top:114px;width:1134px;height:1px;background:#e1e1e1;"></div>
<!-- formula bar -->
<div style="left:10px;top:121.5px;width:71.5px;height:17.5px;background:#fff;"></div>
<div style="left:103.5px;top:121.5px;width:77px;height:17.5px;background:#fff;"></div>
<div style="left:184px;top:121.5px;width:952.5px;height:17.5px;background:#fff;"></div>
<span class="t" style="left:14.50px;top:127.05px;font-size:8.8px;font-weight:normal;color:#333;font-family:'Liberation Sans',sans-serif;transform:scaleX(0.9191);-webkit-text-stroke:.2px currentColor;">L21</span>
<svg style="left:71.500px;top:128.500px" width="6" height="4" viewBox="0 0 6 4"><path d="M0.500 0.500H5.500L3 3.500Z" fill="#555"/></svg>
<svg style="left:90px;top:126px" width="4" height="10" viewBox="0 0 4 10" fill="#a8a8a8"><circle cx="2" cy="1.500" r=".8"/><circle cx="2" cy="5" r=".8"/><circle cx="2" cy="8.5" r=".8"/></svg>
<svg style="left:110px;top:125px" width="64" height="12" viewBox="0 0 64 12" fill="none" stroke="#9a9a9a" stroke-width="1"><path d="M3 2.500L9.5 9.500M9.500 2.500L3 9.500"/><path d="M27.500 6.500L30 9.500L35 2.500"/></svg>
<span class="t" style="left:165.50px;top:124.77px;font-size:11.5px;font-weight:normal;color:#444;font-family:'Liberation Serif',serif;font-style:italic;">f</span>
<span class="t" style="left:168.80px;top:128.73px;font-size:8px;font-weight:normal;color:#444;font-family:'Liberation Serif',serif;font-style:italic;">x</span>
<svg style="left:1126.500px;top:128px" width="7" height="5" viewBox="0 0 7 5"><path d="M1.300 1.200L3.500 3.400L5.700 1.200" fill="none" stroke="#333" stroke-width="1.400"/></svg>
<!-- vertical scrollbar -->
<div style="left:1125px;top:145px;width:15px;height:430px;background:#e6e6e6;"></div>
<div style="left:1126px;top:159px;width:12px;height:405px;background:#d4d4d4;"></div>
<div style="left:1126px;top:148.5px;width:12px;height:9.5px;background:#fff;border:1px solid #c8c8c8"></div>
<div style="left:1126px;top:158px;width:12px;height:216px;background:#fff;border:1px solid #c8c8c8"></div>
<div style="left:1126px;top:564px;width:12px;height:10px;background:#fff;border:1px solid #c8c8c8"></div>
<svg style="left:1129px;top:151px" width="6" height="4" viewBox="0 0 6 4"><path d="M0.300 3.700L3 0.500L5.700 3.700Z" fill="#555"/></svg>
<svg style="left:1129px;top:567px" width="6" height="4" viewBox="0 0 6 4"><path d="M0.300 0.300L3 3.500L5.700 0.300Z" fill="#555"/></svg>
<!-- ribbon -->
<div style="left:73px;top:48px;width:1px;height:63px;background:#d2d0ce;"></div>
<div style="left:233px;top:48px;width:1px;height:63px;background:#d2d0ce;"></div>
<div style="left:427.5px;top:48px;width:1px;height:63px;background:#d2d0ce;"></div>
<div style="left:534px;top:48px;width:1px;height:63px;background:#d2d0ce;"></div>
<div style="left:671px;top:48px;width:1px;height:63px;background:#d2d0ce;"></div>
<div style="left:773px;top:48px;width:1px;height:63px;background:#d2d0ce;"></div>
<div style="left:915px;top:48px;width:1px;height:63px;background:#d2d0ce;"></div>
<div style="left:956px;top:48px;width:1px;height:63px;background:#d2d0ce;"></div>
<div style="left:1008px;top:48px;width:1px;height:63px;background:#d2d0ce;"></div>
<div style="left:1101px;top:48px;width:1px;height:63px;background:#d2d0ce;"></div>
<svg style="left:17px;top:50px" width="23" height="24" viewBox="0 0 23 24" fill="none" ><path d="M6.500 4.500H2.500V20.500H9" stroke="#e8912d" stroke-width="1.300"/><path d="M14.500 4.500H17.500V8" stroke="#e8912d" stroke-width="1.300"/>
<path d="M6.500 5.500V3.500H8.500C8.500 1.500 12.500 1.500 12.500 3.500H14.500V5.500Z" stroke="#666" stroke-width="1" fill="#f3f2f1"/>
<rect x="10.500" y="9.500" width="10" height="12.500" rx="1" stroke="#666" stroke-width="1.100" fill="#fafafa"/></svg>
<span class="t" style="left:16.50px;top:75.55px;font-size:8.8px;font-weight:normal;color:#3a3a3a;font-family:'Liberation Sans',sans-serif;transform:scaleX(0.8667);-webkit-text-stroke:.2px currentColor;">Paste</span>
<svg style="left:22.5px;top:89.0px" width="7" height="5" viewBox="0 0 7 5"><path d="M1.800 1.500L3.500 3.200L5.200 1.500" fill="none" stroke="#4a4a4a" stroke-width="1.150"/></svg>
<svg style="left:44px;top:50px" width="10" height="13" viewBox="0 0 10 13" fill="none" ><path d="M3 1.200L6.500 8.500M7 1.200L3.500 8.500" stroke="#5a5a5a" stroke-width="1"/><ellipse cx="2.900" cy="10" rx="1.500" ry="1.800" stroke="#3b86c8" stroke-width="1" fill="#9cc8f0"/><ellipse cx="7.100" cy="10" rx="1.500" ry="1.800" stroke="#3b86c8" stroke-width="1" fill="#9cc8f0"/></svg>
<svg style="left:42px;top:66px" width="14" height="14" viewBox="0 0 14 14" fill="none" ><path d="M4.500 3.500V1.500H8L9.500 3M4.500 3.500H1.500V10.500H4.500" stroke="#666" stroke-width="1"/><path d="M5.500 4.500H10L12.500 7V12.500H5.500Z" stroke="#666" stroke-width="1" fill="#fafafa"/><path d="M8 9.500H10.500" stroke="#666" stroke-width=".8"/></svg>
<svg style="left:58.0px;top:70.5px" width="7" height="5" viewBox="0 0 7 5"><path d="M1.800 1.500L3.500 3.200L5.200 1.500" fill="none" stroke="#4a4a4a" stroke-width="1.150"/></svg>
<svg style="left:43px;top:83px" width="13" height="12" viewBox="0 0 13 12" fill="none" ><path d="M7.500 5L10.500 1.200L11.800 2.200L9 6" stroke="#666" stroke-width="1"/><path d="M1.500 7L5 3.500L9.500 8L6 11Z" stroke="#e8912d" stroke-width="1.200" fill="#fbe6c8"/></svg>
<span class="t" style="left:16.00px;top:103.75px;font-size:8.8px;font-weight:normal;color:#3a3a3a;font-family:'Liberation Sans',sans-serif;transform:scaleX(0.9427);-webkit-text-stroke:.2px currentColor;">Clipboard</span>
<svg style="left:63.5px;top:105.3px" width="7" height="6" viewBox="0 0 7 6" fill="none" stroke="#5a5a5a" stroke-width=".9"><path d="M0.500 4V0.500H4.500"/><path d="M2.500 2.200L5.800 5.200M5.900 2.600V5.300H3"/></svg>
<div style="left:79.5px;top:54.5px;width:87px;height:15.5px;background:#fff;border:1px solid #e3e3e3"></div>
<div style="left:166.5px;top:54.5px;width:30.5px;height:15.5px;background:#fff;border:1px solid #e3e3e3"></div>
<span class="t" style="left:82.00px;top:58.35px;font-size:8.8px;font-weight:normal;color:#3a3a3a;font-family:'Liberation Sans',sans-serif;transform:scaleX(0.9086);-webkit-text-stroke:.2px currentColor;">Arial</span>
<svg style="left:158.0px;top:60.0px" width="7" height="5" viewBox="0 0 7 5"><path d="M1.800 1.500L3.500 3.200L5.200 1.500" fill="none" stroke="#4a4a4a" stroke-width="1.150"/></svg>
<span class="t" style="left:169.50px;top:58.35px;font-size:8.8px;font-weight:normal;color:#3a3a3a;font-family:'Liberation Sans',sans-serif;transform:scaleX(0.8166);-webkit-text-stroke:.2px currentColor;">10</span>
<svg style="left:188.7px;top:60.0px" width="7" height="5" viewBox="0 0 7 5"><path d="M1.800 1.500L3.500 3.200L5.200 1.500" fill="none" stroke="#4a4a4a" stroke-width="1.150"/></svg>
<span class="t" style="left:199.50px;top:56.27px;font-size:11.5px;font-weight:normal;color:#3a3a3a;font-family:'Liberation Sans',sans-serif;transform:scaleX(1.0428);-webkit-text-stroke:.2px currentColor;">A</span>
<svg style="left:206.5px;top:56px" width="5" height="4" viewBox="0 0 5 4" fill="none" ><path d="M0.800 3L2.500 1.200L4.200 3" stroke="#555" stroke-width=".9"/></svg>
<span class="t" style="left:216.50px;top:57.87px;font-size:9.6px;font-weight:normal;color:#3a3a3a;font-family:'Liberation Sans',sans-serif;transform:scaleX(1.0146);-webkit-text-stroke:.2px currentColor;">A</span>
<svg style="left:222px;top:56.5px" width="5" height="4" viewBox="0 0 5 4" fill="none" ><path d="M0.800 1L2.500 2.800L4.200 1" stroke="#555" stroke-width=".9"/></svg>
<span class="t" style="left:84.00px;top:79.20px;font-size:10.4px;font-weight:bold;color:#3a3a3a;font-family:'Liberation Sans',sans-serif;transform:scaleX(0.7983);-webkit-text-stroke:.2px currentColor;">B</span>
<span class="t" style="left:101.00px;top:79.20px;font-size:10.4px;font-weight:normal;color:#3a3a3a;font-family:'Liberation Serif',serif;font-style:italic;">I</span>
<span class="t" style="left:114.50px;top:79.10px;font-size:9.8px;font-weight:normal;color:#3a3a3a;font-family:'Liberation Sans',sans-serif;transform:scaleX(0.9183);-webkit-text-stroke:.2px currentColor;">U</span>
<div style="left:114.5px;top:88.8px;width:6.5px;height:1px;background:#3a3a3a;"></div>
<svg style="left:127.0px;top:82.0px" width="7" height="5" viewBox="0 0 7 5"><path d="M1.800 1.500L3.500 3.200L5.200 1.500" fill="none" stroke="#4a4a4a" stroke-width="1.150"/></svg>
<div style="left:139px;top:77px;width:1px;height:15px;background:#d2d0ce;"></div>
<svg style="left:144.5px;top:78px" width="12" height="12" viewBox="0 0 12 12" fill="none" ><rect x="1" y="1" width="10" height="9.500" stroke="#777" stroke-width="1"/><path d="M6 1V10.500M1 5.800H11" stroke="#777" stroke-width="1"/><path d="M1 10.700H11" stroke="#555" stroke-width="1.400"/></svg>
<svg style="left:159.7px;top:82.0px" width="7" height="5" viewBox="0 0 7 5"><path d="M1.800 1.500L3.500 3.200L5.200 1.500" fill="none" stroke="#4a4a4a" stroke-width="1.150"/></svg>
<div style="left:172.5px;top:77px;width:1px;height:15px;background:#d2d0ce;"></div>
<svg style="left:178px;top:77px" width="13" height="14" viewBox="0 0 13 14" fill="none" ><path d="M3.500 5.500L6.500 2.500L10 6L6 9.500L2.500 6.500Z" stroke="#666" stroke-width="1" fill="#fff"/><path d="M4.500 2L6.800 4.300" stroke="#666" stroke-width="1"/><path d="M10.800 7.500C11.800 9 11.800 10 10.800 10C9.800 10 9.800 9 10.800 7.500Z" fill="#3b86c8"/><rect x="1" y="11" width="11" height="2.500" fill="#e3e8ee"/></svg>
<svg style="left:192.5px;top:82.0px" width="7" height="5" viewBox="0 0 7 5"><path d="M1.800 1.500L3.500 3.200L5.200 1.500" fill="none" stroke="#4a4a4a" stroke-width="1.150"/></svg>
<span class="t" style="left:205.00px;top:77.47px;font-size:9.6px;font-weight:normal;color:#3a3a3a;font-family:'Liberation Sans',sans-serif;transform:scaleX(1.4049);-webkit-text-stroke:.2px currentColor;">A</span>
<div style="left:204px;top:86.5px;width:11.5px;height:3px;background:#1f7f91;"></div>
<svg style="left:218.7px;top:82.0px" width="7" height="5" viewBox="0 0 7 5"><path d="M1.800 1.500L3.500 3.200L5.200 1.500" fill="none" stroke="#4a4a4a" stroke-width="1.150"/></svg>
<span class="t" style="left:139.00px;top:103.75px;font-size:8.8px;font-weight:normal;color:#3a3a3a;font-family:'Liberation Sans',sans-serif;transform:scaleX(0.9370);-webkit-text-stroke:.2px currentColor;">Font</span>
<svg style="left:223.5px;top:105.3px" width="7" height="6" viewBox="0 0 7 6" fill="none" stroke="#5a5a5a" stroke-width=".9"><path d="M0.500 4V0.500H4.500"/><path d="M2.500 2.200L5.800 5.200M5.900 2.600V5.300H3"/></svg>
<svg style="left:241.5px;top:55px" width="12" height="12" viewBox="0 0 12 12" fill="none" ><path d="M0.5 1.5H11" stroke="#666" stroke-width="1"/><path d="M2.5 4.5H9" stroke="#666" stroke-width="1"/><path d="M0.5 7.5H11" stroke="#666" stroke-width="1"/></svg>
<svg style="left:257.5px;top:56.5px" width="12" height="12" viewBox="0 0 12 12" fill="none" ><path d="M0.5 2.5H11" stroke="#666" stroke-width="1"/><path d="M2.5 5.5H9" stroke="#666" stroke-width="1"/><path d="M0.5 8.5H11" stroke="#666" stroke-width="1"/></svg>
<div style="left:271px;top:54px;width:15.5px;height:16px;background:#c8c8c8;"></div>
<svg style="left:273px;top:58.5px" width="12" height="12" viewBox="0 0 12 12" fill="none" ><path d="M0.5 2.5H11" stroke="#666" stroke-width="1"/><path d="M2.5 5.5H9" stroke="#666" stroke-width="1"/><path d="M0.5 8.5H11" stroke="#666" stroke-width="1"/></svg>
<svg style="left:294px;top:54px" width="14" height="14" viewBox="0 0 14 14" fill="none" ><path d="M3 11.500L11 4M11 4H8M11 4V7" stroke="#3b86c8" stroke-width="1.100"/><g transform="rotate(-40 5 5)" stroke="#666" stroke-width=".85"><path d="M1.500 4.200C2.300 3.400 3.800 3.600 3.800 4.800V7.200M3.800 5.600C2.600 5.400 1.400 5.800 1.500 6.600C1.600 7.400 3.200 7.400 3.800 6.500"/><path d="M5.500 2.500V7.200M5.500 5.200C6.100 4.200 7.800 4.400 7.800 5.800C7.800 7.200 6.100 7.500 5.500 6.500"/></g></svg>
<svg style="left:308.5px;top:60.0px" width="7" height="5" viewBox="0 0 7 5"><path d="M1.800 1.500L3.500 3.200L5.200 1.500" fill="none" stroke="#4a4a4a" stroke-width="1.150"/></svg>
<div style="left:327px;top:54px;width:1px;height:38px;background:#d2d0ce;"></div>
<svg style="left:332px;top:55px" width="12" height="13" viewBox="0 0 12 13" fill="none" ><path d="M1 3.500H3.500M1.500 1.500C3 1.200 3.500 2 3.500 3V5.500M3.500 4C2 3.800 1 4.300 1.200 5C1.500 5.800 3 5.600 3.500 4.800" stroke="#666" stroke-width=".8"/><path d="M6 1V5.500M6 3.800C6.500 2.800 8.200 3 8.200 4.300C8.200 5.600 6.500 5.800 6 4.800" stroke="#666" stroke-width=".8"/><path d="M1.500 8.200H8.500C11 8.200 11 11.500 8.500 11.500H5M6.500 10L5 11.500L6.500 13" stroke="#3b86c8" stroke-width="1"/><path d="M1.500 11.500H3.500" stroke="#3b86c8" stroke-width="1"/></svg>
<span class="t" style="left:346.00px;top:58.35px;font-size:8.8px;font-weight:normal;color:#3a3a3a;font-family:'Liberation Sans',sans-serif;transform:scaleX(0.9547);-webkit-text-stroke:.2px currentColor;">Wrap Text</span>
<svg style="left:241.5px;top:78px" width="12" height="12" viewBox="0 0 12 12" fill="none" ><path d="M0.5 1.5H11" stroke="#666" stroke-width="1"/><path d="M0.5 4.5H7.5" stroke="#666" stroke-width="1"/><path d="M0.5 7.5H11" stroke="#666" stroke-width="1"/><path d="M0.5 10.5H7.5" stroke="#666" stroke-width="1"/></svg>
<svg style="left:257.5px;top:78px" width="12" height="12" viewBox="0 0 12 12" fill="none" ><path d="M0.5 1.5H11" stroke="#666" stroke-width="1"/><path d="M2.2 4.5H9.3" stroke="#666" stroke-width="1"/><path d="M0.5 7.5H11" stroke="#666" stroke-width="1"/><path d="M2.2 10.5H9.3" stroke="#666" stroke-width="1"/></svg>
<svg style="left:272.5px;top:78px" width="12" height="12" viewBox="0 0 12 12" fill="none" ><path d="M0.5 1.5H11" stroke="#666" stroke-width="1"/><path d="M4 4.5H11" stroke="#666" stroke-width="1"/><path d="M0.5 7.5H11" stroke="#666" stroke-width="1"/><path d="M4 10.5H11" stroke="#666" stroke-width="1"/></svg>
<div style="left:289px;top:77px;width:1px;height:15px;background:#d2d0ce;"></div>
<svg style="left:294.5px;top:78px" width="13" height="12" viewBox="0 0 13 12" fill="none" ><path d="M0.500 1.500H12M7 4.500H12M7 7.500H12M0.500 10.500H12" stroke="#666" stroke-width="1"/><path d="M5.500 6H1M2.800 4.200L1 6L2.800 7.800" stroke="#3b86c8" stroke-width="1"/></svg>
<svg style="left:310.5px;top:78px" width="13" height="12" viewBox="0 0 13 12" fill="none" ><path d="M0.500 1.500H12M7 4.500H12M7 7.500H12M0.500 10.500H12" stroke="#666" stroke-width="1"/><path d="M0.500 6H5M3.200 4.200L5 6L3.200 7.800" stroke="#3b86c8" stroke-width="1"/></svg>
<svg style="left:331.5px;top:78px" width="13" height="12" viewBox="0 0 13 12" fill="none" ><rect x="1" y="1" width="11" height="10" stroke="#3b86c8" stroke-width="1" fill="#fff"/><rect x="1.500" y="4" width="10" height="4" fill="#d4e7f8"/><path d="M4.500 1V4M8.500 1V4M4.500 8V11M8.500 8V11" stroke="#3b86c8" stroke-width=".9"/><path d="M3.500 6H9.500M4.800 4.800L3.500 6L4.800 7.200M8.200 4.800L9.500 6L8.200 7.200" stroke="#1c5fa8" stroke-width=".8"/></svg>
<span class="t" style="left:346.00px;top:80.75px;font-size:8.8px;font-weight:normal;color:#3a3a3a;font-family:'Liberation Sans',sans-serif;transform:scaleX(0.9904);-webkit-text-stroke:.2px currentColor;">Merge &amp; Center</span>
<svg style="left:412.0px;top:82.0px" width="7" height="5" viewBox="0 0 7 5"><path d="M1.800 1.500L3.500 3.200L5.200 1.500" fill="none" stroke="#4a4a4a" stroke-width="1.150"/></svg>
<span class="t" style="left:306.00px;top:103.75px;font-size:8.8px;font-weight:normal;color:#3a3a3a;font-family:'Liberation Sans',sans-serif;transform:scaleX(0.9585);-webkit-text-stroke:.2px currentColor;">Alignment</span>
<svg style="left:419.5px;top:105.3px" width="7" height="6" viewBox="0 0 7 6" fill="none" stroke="#5a5a5a" stroke-width=".9"><path d="M0.500 4V0.500H4.500"/><path d="M2.500 2.200L5.800 5.200M5.900 2.600V5.300H3"/></svg>
<div style="left:434.5px;top:54.5px;width:94px;height:15.5px;background:#fff;border:1px solid #e3e3e3"></div>
<span class="t" style="left:436.50px;top:58.35px;font-size:8.8px;font-weight:normal;color:#3a3a3a;font-family:'Liberation Sans',sans-serif;transform:scaleX(0.8947);-webkit-text-stroke:.2px currentColor;">General</span>
<svg style="left:520.5px;top:60.0px" width="7" height="5" viewBox="0 0 7 5"><path d="M1.800 1.500L3.500 3.200L5.200 1.500" fill="none" stroke="#4a4a4a" stroke-width="1.150"/></svg>
<span class="t" style="left:438.00px;top:78.84px;font-size:12px;font-weight:normal;color:#3a3a3a;font-family:'Liberation Sans',sans-serif;transform:scaleX(0.9720);-webkit-text-stroke:.2px currentColor;">$</span>
<svg style="left:450.0px;top:82.0px" width="7" height="5" viewBox="0 0 7 5"><path d="M1.800 1.500L3.500 3.200L5.200 1.500" fill="none" stroke="#4a4a4a" stroke-width="1.150"/></svg>
<span class="t" style="left:462.00px;top:78.34px;font-size:12px;font-weight:normal;color:#3a3a3a;font-family:'Liberation Sans',sans-serif;transform:scaleX(1.0776);-webkit-text-stroke:.2px currentColor;">%</span>
<svg style="left:479px;top:79px" width="9" height="12" viewBox="0 0 9 12" fill="none" ><path d="M4.600 1.200C6.300 1.200 7.300 2.500 7.300 4.200C7.300 6.800 5.600 8.800 3 9.800L2.600 9C4.200 8.200 5 7.200 5.100 6.200C3.500 6.400 2.300 5.300 2.300 3.700C2.300 2.300 3.300 1.200 4.600 1.200Z" fill="#3a3a3a"/></svg>
<div style="left:494.5px;top:77px;width:1px;height:15px;background:#d2d0ce;"></div>
<svg style="left:498.5px;top:78px" width="13" height="12" viewBox="0 0 13 12" fill="none" ><path d="M5.500 2.500H1M2.500 1L1 2.500L2.500 4" stroke="#3b86c8" stroke-width="1"/><ellipse cx="8.5" cy="3.500" rx="1.400" ry="2.300" stroke="#666" stroke-width=".9"/><ellipse cx="5.500" cy="9" rx="1.400" ry="2.300" stroke="#666" stroke-width=".9"/><ellipse cx="9.500" cy="9" rx="1.400" ry="2.300" stroke="#666" stroke-width=".9"/><circle cx="2.500" cy="10.500" r=".6" fill="#666"/></svg>
<svg style="left:514.5px;top:78px" width="13" height="12" viewBox="0 0 13 12" fill="none" ><ellipse cx="6" cy="3" rx="1.400" ry="2.300" stroke="#666" stroke-width=".9"/><ellipse cx="10" cy="3" rx="1.400" ry="2.300" stroke="#666" stroke-width=".9"/><circle cx="3" cy="4.500" r=".6" fill="#666"/><path d="M1 9H5.500M4 7.500L5.500 9L4 10.500" stroke="#3b86c8" stroke-width="1"/><ellipse cx="9.500" cy="9" rx="1.400" ry="2.300" stroke="#666" stroke-width=".9"/></svg>
<span class="t" style="left:461.00px;top:103.75px;font-size:8.8px;font-weight:normal;color:#3a3a3a;font-family:'Liberation Sans',sans-serif;transform:scaleX(0.9106);-webkit-text-stroke:.2px currentColor;">Number</span>
<svg style="left:524.5px;top:105.3px" width="7" height="6" viewBox="0 0 7 6" fill="none" stroke="#5a5a5a" stroke-width=".9"><path d="M0.500 4V0.500H4.500"/><path d="M2.500 2.200L5.800 5.200M5.900 2.600V5.300H3"/></svg>
<svg style="left:555.5px;top:52px" width="22" height="18" viewBox="0 0 22 18" fill="none" ><rect x="1" y="1" width="20" height="15.800" fill="#fff" stroke="#6a6a6a" stroke-width="1"/><rect x="4.600" y="1.500" width="9.600" height="4.700" fill="#f1707c"/><rect x="4.600" y="11.400" width="9.600" height="5" fill="#f1707c"/><rect x="4.600" y="6.400" width="5.700" height="4.800" fill="#5b9bd5"/><path d="M4.500 1.500V16.300M14.300 1.500V16.300M17.400 1.500V16.300" stroke="#d9868e" stroke-width=".7"/><path d="M1.500 6.300H20.500M1.500 11.300H20.500" stroke="#d9868e" stroke-width=".7"/></svg>
<span class="t" style="left:544.50px;top:75.55px;font-size:8.8px;font-weight:normal;color:#3a3a3a;font-family:'Liberation Sans',sans-serif;transform:scaleX(0.9883);-webkit-text-stroke:.2px currentColor;">Conditional</span>
<span class="t" style="left:542.00px;top:87.05px;font-size:8.8px;font-weight:normal;color:#3a3a3a;font-family:'Liberation Sans',sans-serif;transform:scaleX(0.9870);-webkit-text-stroke:.2px currentColor;">Formatting</span>
<svg style="left:585.0px;top:89.0px" width="7" height="5" viewBox="0 0 7 5"><path d="M1.800 1.500L3.500 3.200L5.200 1.500" fill="none" stroke="#4a4a4a" stroke-width="1.150"/></svg>
<svg style="left:602px;top:52px" width="25" height="21" viewBox="0 0 25 21" fill="none" ><rect x="1.500" y="1" width="20" height="15.800" fill="#fff" stroke="#6a6a6a" stroke-width="1"/><rect x="8.300" y="6.300" width="12.700" height="10" fill="#62a5e8"/><path d="M1.500 6.200H21.500M1.500 11.400H21.500M8.200 1V16.800M14.800 1V16.800" stroke="#6a6a6a" stroke-width=".8"/><path d="M22.6 6.3L15.2 14.5" stroke="#6a6a6a" stroke-width="2.700" stroke-linecap="round"/><path d="M22.6 6.3L15.2 14.5" stroke="#fff" stroke-width="1.300" stroke-linecap="round"/><path d="M14.2 14.2c-2.600 0.200 -2.400 3 -5 3.800c2.500 1.400 6.500 0.600 7 -2.200z" fill="#3f8fdd" stroke="#2f7fd0" stroke-width=".5"/></svg>
<span class="t" style="left:595.00px;top:75.55px;font-size:8.8px;font-weight:normal;color:#3a3a3a;font-family:'Liberation Sans',sans-serif;transform:scaleX(0.9215);-webkit-text-stroke:.2px currentColor;">Format as</span>
<span class="t" style="left:600.00px;top:87.05px;font-size:8.8px;font-weight:normal;color:#3a3a3a;font-family:'Liberation Sans',sans-serif;transform:scaleX(0.9272);-webkit-text-stroke:.2px currentColor;">Table</span>
<svg style="left:620.0px;top:89.0px" width="7" height="5" viewBox="0 0 7 5"><path d="M1.800 1.500L3.500 3.200L5.200 1.500" fill="none" stroke="#4a4a4a" stroke-width="1.150"/></svg>
<svg style="left:639px;top:52px" width="25" height="21" viewBox="0 0 25 21" fill="none" ><rect x="1.500" y="1" width="20" height="15.800" fill="#fff" stroke="#6a6a6a" stroke-width="1"/><rect x="5" y="4.800" width="16" height="9.400" fill="#62a5e8"/><path d="M1.500 4.600H21.500M1.500 14.300H21.500M4.800 1V16.800M18.500 1V16.800" stroke="#6a6a6a" stroke-width=".8"/><path d="M22.6 6.3L15.2 14.5" stroke="#6a6a6a" stroke-width="2.700" stroke-linecap="round"/><path d="M22.6 6.3L15.2 14.5" stroke="#fff" stroke-width="1.300" stroke-linecap="round"/><path d="M14.2 14.2c-2.600 0.200 -2.400 3 -5 3.800c2.500 1.400 6.500 0.600 7 -2.200z" fill="#3f8fdd" stroke="#2f7fd0" stroke-width=".5"/></svg>
<span class="t" style="left:643.50px;top:75.55px;font-size:8.8px;font-weight:normal;color:#3a3a3a;font-family:'Liberation Sans',sans-serif;transform:scaleX(0.9237);-webkit-text-stroke:.2px currentColor;">Cell</span>
<span class="t" style="left:635.50px;top:87.05px;font-size:8.8px;font-weight:normal;color:#3a3a3a;font-family:'Liberation Sans',sans-serif;transform:scaleX(0.8970);-webkit-text-stroke:.2px currentColor;">Styles</span>
<svg style="left:658.0px;top:89.0px" width="7" height="5" viewBox="0 0 7 5"><path d="M1.800 1.500L3.500 3.200L5.200 1.500" fill="none" stroke="#4a4a4a" stroke-width="1.150"/></svg>
<span class="t" style="left:592.50px;top:103.75px;font-size:8.8px;font-weight:normal;color:#3a3a3a;font-family:'Liberation Sans',sans-serif;transform:scaleX(0.8761);-webkit-text-stroke:.2px currentColor;">Styles</span>
<svg style="left:680px;top:52px" width="24" height="18" viewBox="0 0 24 18" fill="none" ><rect x="2.500" y="1.500" width="19" height="14" fill="#fff" stroke="#777" stroke-width="1"/><path d="M2.500 6H21.500M2.500 11H21.500M9 1.500V15.500M15.500 1.500V15.500" stroke="#777" stroke-width=".9"/><rect x="5" y="6.500" width="17" height="4" fill="#5aa0e6"/><path d="M6 8.500H1.500M4 6L1.200 8.500L4 11" stroke="#3b86c8" stroke-width="1.100" fill="none"/></svg>
<span class="t" style="left:682.00px;top:75.55px;font-size:8.8px;font-weight:normal;color:#3a3a3a;font-family:'Liberation Sans',sans-serif;transform:scaleX(0.9312);-webkit-text-stroke:.2px currentColor;">Insert</span>
<svg style="left:688.5px;top:89.0px" width="7" height="5" viewBox="0 0 7 5"><path d="M1.800 1.500L3.500 3.200L5.200 1.500" fill="none" stroke="#4a4a4a" stroke-width="1.150"/></svg>
<svg style="left:710px;top:52px" width="24" height="18" viewBox="0 0 24 18" fill="none" ><rect x="2.500" y="1.500" width="19" height="14" fill="#fff" stroke="#777" stroke-width="1"/><path d="M2.500 6H21.500M2.500 11H21.500M9 1.500V15.500M15.500 1.500V15.500" stroke="#777" stroke-width=".9"/><rect x="3" y="6.500" width="10" height="4" fill="#5aa0e6"/><path d="M15.500 5L22 12M22 5L15.500 12" stroke="#e04848" stroke-width="1.200"/></svg>
<span class="t" style="left:710.50px;top:75.55px;font-size:8.8px;font-weight:normal;color:#3a3a3a;font-family:'Liberation Sans',sans-serif;transform:scaleX(0.9042);-webkit-text-stroke:.2px currentColor;">Delete</span>
<svg style="left:718.5px;top:89.0px" width="7" height="5" viewBox="0 0 7 5"><path d="M1.800 1.500L3.500 3.200L5.200 1.500" fill="none" stroke="#4a4a4a" stroke-width="1.150"/></svg>
<svg style="left:740px;top:49px" width="24" height="21" viewBox="0 0 24 21" fill="none" ><path d="M6.500 1.500H17.500M6.500 0.500V2.500M17.500 0.500V2.500" stroke="#3b86c8" stroke-width="1"/><g transform="translate(0,3)"><rect x="2.500" y="1.500" width="19" height="14" fill="#fff" stroke="#777" stroke-width="1"/><path d="M2.500 6H21.500M2.500 11H21.500M9 1.500V15.500M15.500 1.500V15.500" stroke="#777" stroke-width=".9"/><rect x="9.500" y="6.500" width="12" height="4" fill="#5aa0e6"/></g></svg>
<span class="t" style="left:739.00px;top:75.55px;font-size:8.8px;font-weight:normal;color:#3a3a3a;font-family:'Liberation Sans',sans-serif;transform:scaleX(0.9507);-webkit-text-stroke:.2px currentColor;">Format</span>
<svg style="left:748.5px;top:89.0px" width="7" height="5" viewBox="0 0 7 5"><path d="M1.800 1.500L3.500 3.200L5.200 1.500" fill="none" stroke="#4a4a4a" stroke-width="1.150"/></svg>
<span class="t" style="left:714.00px;top:103.75px;font-size:8.8px;font-weight:normal;color:#3a3a3a;font-family:'Liberation Sans',sans-serif;transform:scaleX(0.8946);-webkit-text-stroke:.2px currentColor;">Cells</span>
<span class="t" style="left:782.00px;top:49.50px;font-size:13px;font-weight:normal;color:#444;font-family:'Liberation Sans',sans-serif;transform:scaleX(1.1806);">Σ</span>
<span class="t" style="left:795.00px;top:51.85px;font-size:8.8px;font-weight:normal;color:#3a3a3a;font-family:'Liberation Sans',sans-serif;transform:scaleX(0.9672);-webkit-text-stroke:.2px currentColor;">AutoSum</span>
<svg style="left:836.5px;top:53.0px" width="7" height="5" viewBox="0 0 7 5"><path d="M1.800 1.500L3.500 3.200L5.200 1.500" fill="none" stroke="#4a4a4a" stroke-width="1.150"/></svg>
<svg style="left:780.5px;top:65.5px" width="13" height="12" viewBox="0 0 13 12" fill="none" ><rect x="1" y="1" width="11" height="10" stroke="#666" stroke-width="1"/><path d="M1 2H12" stroke="#666" stroke-width="1.600"/><path d="M6.500 4V9M4.500 7L6.500 9L8.5 7" stroke="#3b86c8" stroke-width="1"/></svg>
<span class="t" style="left:795.00px;top:68.05px;font-size:8.8px;font-weight:normal;color:#3a3a3a;font-family:'Liberation Sans',sans-serif;transform:scaleX(0.8889);-webkit-text-stroke:.2px currentColor;">Fill</span>
<svg style="left:806.5px;top:69.5px" width="7" height="5" viewBox="0 0 7 5"><path d="M1.800 1.500L3.500 3.200L5.200 1.500" fill="none" stroke="#4a4a4a" stroke-width="1.150"/></svg>
<svg style="left:781px;top:82px" width="12" height="11" viewBox="0 0 12 11" fill="none" ><path d="M1 7L6 1.500L10.500 5L5.500 10.500H3.500Z" stroke="#b050c8" stroke-width="1" fill="#f6e6fa"/><path d="M2.800 5.200L7.200 8.700" stroke="#b050c8" stroke-width="1"/></svg>
<span class="t" style="left:795.00px;top:84.85px;font-size:8.8px;font-weight:normal;color:#3a3a3a;font-family:'Liberation Sans',sans-serif;transform:scaleX(0.9034);-webkit-text-stroke:.2px currentColor;">Clear</span>
<svg style="left:815.0px;top:85.8px" width="7" height="5" viewBox="0 0 7 5"><path d="M1.800 1.500L3.500 3.200L5.200 1.500" fill="none" stroke="#4a4a4a" stroke-width="1.150"/></svg>
<span class="t" style="left:851.00px;top:50.91px;font-size:10.5px;font-weight:normal;color:#2e86d8;font-family:'Liberation Sans',sans-serif;transform:scaleX(1.0690);-webkit-text-stroke:.25px currentColor;">A</span>
<span class="t" style="left:851.50px;top:60.91px;font-size:10.5px;font-weight:normal;color:#444;font-family:'Liberation Sans',sans-serif;transform:scaleX(1.0900);-webkit-text-stroke:.2px currentColor;">Z</span>
<svg style="left:859px;top:55px" width="14" height="14" viewBox="0 0 14 14" fill="none" ><path d="M1.200 1.500H12.800L8.300 7V12L5.700 10.500V7Z" stroke="#555" stroke-width="1.100" fill="#f3f2f1"/></svg>
<span class="t" style="left:849.50px;top:75.55px;font-size:8.8px;font-weight:normal;color:#3a3a3a;font-family:'Liberation Sans',sans-serif;transform:scaleX(0.9815);-webkit-text-stroke:.2px currentColor;">Sort &amp;</span>
<span class="t" style="left:848.00px;top:87.05px;font-size:8.8px;font-weight:normal;color:#3a3a3a;font-family:'Liberation Sans',sans-serif;transform:scaleX(0.9712);-webkit-text-stroke:.2px currentColor;">Filter</span>
<svg style="left:868.0px;top:89.0px" width="7" height="5" viewBox="0 0 7 5"><path d="M1.800 1.500L3.500 3.200L5.200 1.500" fill="none" stroke="#4a4a4a" stroke-width="1.150"/></svg>
<svg style="left:881px;top:50px" width="23" height="22" viewBox="0 0 23 22" fill="none" ><circle cx="14" cy="9" r="7.500" stroke="#555" stroke-width="1" fill="#f8f8f8"/><path d="M9 14.500L1.500 21" stroke="#555" stroke-width="1.200"/></svg>
<span class="t" style="left:880.00px;top:75.55px;font-size:8.8px;font-weight:normal;color:#3a3a3a;font-family:'Liberation Sans',sans-serif;transform:scaleX(0.9828);-webkit-text-stroke:.2px currentColor;">Find &amp;</span>
<span class="t" style="left:878.00px;top:87.05px;font-size:8.8px;font-weight:normal;color:#3a3a3a;font-family:'Liberation Sans',sans-serif;transform:scaleX(0.9201);-webkit-text-stroke:.2px currentColor;">Select</span>
<svg style="left:901.0px;top:89.0px" width="7" height="5" viewBox="0 0 7 5"><path d="M1.800 1.500L3.500 3.200L5.200 1.500" fill="none" stroke="#4a4a4a" stroke-width="1.150"/></svg>
<span class="t" style="left:831.00px;top:103.75px;font-size:8.8px;font-weight:normal;color:#3a3a3a;font-family:'Liberation Sans',sans-serif;transform:scaleX(0.9849);-webkit-text-stroke:.2px currentColor;">Editing</span>
<svg style="left:926px;top:50px" width="20" height="22" viewBox="0 0 20 22" fill="none" ><path d="M8.500 1.500H16.500L12 8.500H18L5 20.500L8.500 11.500H2.500Z" fill="#6cabec" stroke="#2e78c8" stroke-width="1" stroke-linejoin="round"/></svg>
<span class="t" style="left:926.00px;top:75.55px;font-size:8.8px;font-weight:normal;color:#3a3a3a;font-family:'Liberation Sans',sans-serif;transform:scaleX(0.9057);-webkit-text-stroke:.2px currentColor;">Ideas</span>
<span class="t" style="left:926.00px;top:103.75px;font-size:8.8px;font-weight:normal;color:#3a3a3a;font-family:'Liberation Sans',sans-serif;transform:scaleX(0.9057);-webkit-text-stroke:.2px currentColor;">Ideas</span>
<svg style="left:974px;top:50px" width="22" height="22" viewBox="0 0 22 22" fill="none" ><path d="M2.500 2.500H10L13.500 6V19.500H2.500Z" stroke="#c4c4c4" stroke-width="1" fill="#f6f6f6"/><path d="M6 10L13 3.500L16.500 7L9.500 13.500Z" stroke="#c8c8c8" stroke-width="1" fill="#e4e4e4"/><path d="M13.500 2L16 0.500L19.500 4L18 6.500Z" stroke="#c8c8c8" stroke-width="1" fill="#f0f0f0"/></svg>
<span class="t" style="left:963.50px;top:75.55px;font-size:8.8px;font-weight:normal;color:#b0b0b0;font-family:'Liberation Sans',sans-serif;transform:scaleX(0.9467);-webkit-text-stroke:.2px currentColor;">Sensitivity</span>
<svg style="left:978.5px;top:89.0px" width="7" height="5" viewBox="0 0 7 5"><path d="M1.800 1.500L3.500 3.200L5.200 1.500" fill="none" stroke="#b8b8b8" stroke-width="1.150"/></svg>
<span class="t" style="left:964.00px;top:103.75px;font-size:8.8px;font-weight:normal;color:#3a3a3a;font-family:'Liberation Sans',sans-serif;transform:scaleX(0.9341);-webkit-text-stroke:.2px currentColor;">Sensitivity</span>
<svg style="left:1017px;top:49px" width="11" height="13" viewBox="0 0 11 13" fill="none" ><path d="M1.500 1H7L10 4V12H1.500Z" fill="#1878d8"/><rect x="3.500" y="6" width="4" height="4" fill="none" stroke="#fff" stroke-width=".9"/></svg>
<span class="t" style="left:1030.00px;top:51.85px;font-size:8.8px;font-weight:normal;color:#3a3a3a;font-family:'Liberation Sans',sans-serif;transform:scaleX(0.8826);-webkit-text-stroke:.2px currentColor;">Create PDF</span>
<svg style="left:1016px;top:65px" width="13" height="13" viewBox="0 0 13 13" fill="none" ><circle cx="6.500" cy="6.500" r="5" stroke="#1878d8" stroke-width="1.500" stroke-dasharray="2.600 1.330" opacity=".55"/><circle cx="6.500" cy="6.500" r="4.400" stroke="#1878d8" stroke-width="1.100"/><circle cx="6.500" cy="6.500" r="2.300" stroke="#1878d8" stroke-width="1"/></svg>
<span class="t" style="left:1030.00px;top:68.05px;font-size:8.8px;font-weight:normal;color:#3a3a3a;font-family:'Liberation Sans',sans-serif;transform:scaleX(0.9378);-webkit-text-stroke:.2px currentColor;">Change Settings</span>
<svg style="left:1016px;top:81px" width="13" height="13" viewBox="0 0 13 13" fill="none" ><path d="M1 3.500H7.500V12H1Z" fill="#6cabec"/><path d="M3.500 1H8.500L11.500 4V10.500H3.500Z" fill="#1878d8"/><rect x="5.500" y="5" width="3.500" height="3.500" fill="none" stroke="#fff" stroke-width=".9"/></svg>
<span class="t" style="left:1030.00px;top:84.75px;font-size:8.8px;font-weight:normal;color:#3a3a3a;font-family:'Liberation Sans',sans-serif;transform:scaleX(0.9049);-webkit-text-stroke:.2px currentColor;">Batch PDF</span>
<span class="t" style="left:1037.00px;top:103.75px;font-size:8.8px;font-weight:normal;color:#3a3a3a;font-family:'Liberation Sans',sans-serif;transform:scaleX(0.8959);-webkit-text-stroke:.2px currentColor;">Bluebeam</span>
<svg style="left:1126px;top:105px" width="9" height="6" viewBox="0 0 9 6" fill="none" ><path d="M1.200 4.800L4.500 1.500L7.800 4.800" stroke="#444" stroke-width="1.200"/></svg>
<!-- sheet tabs -->
<div style="left:6px;top:574px;width:1134px;height:19px;background:#e5e5e5;"></div>
<div style="left:6px;top:574px;width:682px;height:1px;background:#bfbfbf;"></div>
<div style="left:756px;top:574px;width:369px;height:1px;background:#bfbfbf;"></div>
<svg style="left:23px;top:579px" width="28" height="8" viewBox="0 0 28 8"><path d="M5 1V7L1.500 4Z" fill="#c4c4c4"/><path d="M22 1V7L25.500 4Z" fill="#2a7a4f"/></svg>
<div style="left:688px;top:574px;width:68px;height:18.5px;background:#fff;border-left:1px solid #c4c4c4;border-right:1px solid #c4c4c4;"></div>
<div style="left:688px;top:590.5px;width:68px;height:2px;background:#217346;"></div>
<div style="left:76px;top:577.5px;width:1px;height:13.5px;background:#bdbdbd;"></div>
<div style="left:169px;top:577.5px;width:1px;height:13.5px;background:#bdbdbd;"></div>
<div style="left:249px;top:577.5px;width:1px;height:13.5px;background:#bdbdbd;"></div>
<div style="left:398.5px;top:577.5px;width:1px;height:13.5px;background:#bdbdbd;"></div>
<div style="left:518px;top:577.5px;width:1px;height:13.5px;background:#bdbdbd;"></div>
<div style="left:590px;top:577.5px;width:1px;height:13.5px;background:#bdbdbd;"></div>
<div style="left:821.5px;top:577.5px;width:1px;height:13.5px;background:#bdbdbd;"></div>
<div style="left:869.5px;top:577.5px;width:1px;height:13.5px;background:#bdbdbd;"></div>
<span class="t" style="left:88.00px;top:579.00px;font-size:9.8px;font-weight:normal;color:#444;font-family:'Liberation Sans',sans-serif;transform:scaleX(0.9160);-webkit-text-stroke:.15px currentColor;">Instructions, TOC</span>
<span class="t" style="left:180.00px;top:579.00px;font-size:9.8px;font-weight:normal;color:#444;font-family:'Liberation Sans',sans-serif;transform:scaleX(0.8883);-webkit-text-stroke:.15px currentColor;">Exec Summary</span>
<span class="t" style="left:261.00px;top:579.00px;font-size:9.8px;font-weight:normal;color:#444;font-family:'Liberation Sans',sans-serif;transform:scaleX(0.9404);-webkit-text-stroke:.15px currentColor;">Prime Contract Change Orders</span>
<span class="t" style="left:409.50px;top:579.00px;font-size:9.8px;font-weight:normal;color:#444;font-family:'Liberation Sans',sans-serif;transform:scaleX(0.9275);-webkit-text-stroke:.15px currentColor;">Change Order Requests</span>
<span class="t" style="left:529.00px;top:579.00px;font-size:9.8px;font-weight:normal;color:#444;font-family:'Liberation Sans',sans-serif;transform:scaleX(0.9271);-webkit-text-stroke:.15px currentColor;">Contingency</span>
<span class="t" style="left:600.50px;top:579.00px;font-size:9.8px;font-weight:normal;color:#444;font-family:'Liberation Sans',sans-serif;transform:scaleX(0.9241);-webkit-text-stroke:.15px currentColor;">Subcontract Status</span>
<span class="t" style="left:697.50px;top:579.00px;font-size:9.8px;font-weight:normal;color:#217346;font-family:'Liberation Sans',sans-serif;transform:scaleX(0.9878);-webkit-text-stroke:.5px currentColor;">Invoice Log</span>
<span class="t" style="left:765.50px;top:579.00px;font-size:9.8px;font-weight:normal;color:#444;font-family:'Liberation Sans',sans-serif;transform:scaleX(0.9180);-webkit-text-stroke:.15px currentColor;">Allowances</span>
<span class="t" style="left:831.50px;top:579.00px;font-size:9.8px;font-weight:normal;color:#444;font-family:'Liberation Sans',sans-serif;transform:scaleX(0.9176);-webkit-text-stroke:.15px currentColor;">Buyout</span>
<span class="t" style="left:879.50px;top:579.00px;font-size:9.8px;font-weight:normal;color:#444;font-family:'Liberation Sans',sans-serif;transform:scaleX(0.9336);-webkit-text-stroke:.15px currentColor;">Budget</span>
<span class="t" style="left:915.50px;top:577.99px;font-size:11px;font-weight:bold;color:#2f5a42;font-family:'Liberation Sans',sans-serif;transform:scaleX(0.8722);">...</span>
<svg style="left:932px;top:577px" width="12" height="12" viewBox="0 0 12 12" fill="none" stroke="#666" stroke-width="1"><circle cx="6" cy="6" r="5"/><path d="M6 3.300V8.700M3.300 6H8.700"/></svg>
<svg style="left:957px;top:578px" width="4" height="10" viewBox="0 0 4 10" fill="#a8a8a8"><circle cx="2" cy="1.500" r=".8"/><circle cx="2" cy="5" r=".8"/><circle cx="2" cy="8.5" r=".8"/></svg>
<div style="left:970px;top:578px;width:155px;height:11px;background:#dadada;"></div>
<div style="left:970px;top:578px;width:10.5px;height:11px;background:#fff;border:1px solid #c8c8c8"></div>
<div style="left:981px;top:578px;width:125.5px;height:11px;background:#fff;border:1px solid #c8c8c8"></div>
<div style="left:1114.5px;top:578px;width:10.5px;height:11px;background:#fff;border:1px solid #c8c8c8"></div>
<svg style="left:973px;top:581px" width="4" height="6" viewBox="0 0 4 6"><path d="M3.700 0.300V5.700L0.500 3Z" fill="#444"/></svg>
<svg style="left:1118px;top:581px" width="4" height="6" viewBox="0 0 4 6"><path d="M0.300 0.300V5.700L3.500 3Z" fill="#444"/></svg>
<!-- status bar -->
<div style="left:6px;top:593px;width:1134px;height:16px;background:#f3f2f1;"></div>
<span class="t" style="left:11.00px;top:598.09px;font-size:8.4px;font-weight:normal;color:#3c3c3c;font-family:'Liberation Sans',sans-serif;transform:scaleX(0.9618);-webkit-text-stroke:.2px currentColor;">Cell I6 note by</span>
<svg style="left:842px;top:595px" width="13" height="12" viewBox="0 0 13 12" fill="none" stroke="#555" stroke-width="1"><rect x="1.500" y="1.500" width="9" height="6.500"/><path d="M4 10.500H7"/><circle cx="9" cy="8.5" r="2" fill="#f3f2f1"/></svg>
<span class="t" style="left:855.50px;top:598.09px;font-size:8.4px;font-weight:normal;color:#3c3c3c;font-family:'Liberation Sans',sans-serif;transform:scaleX(0.9657);-webkit-text-stroke:.2px currentColor;">Display Settings</span>
<div style="left:927px;top:593px;width:28.5px;height:16px;background:#d2d2d2;"></div>
<svg style="left:935px;top:595px" width="12" height="12" viewBox="0 0 12 12" fill="none" stroke="#444" stroke-width="1"><rect x="1.500" y="1.500" width="9" height="9"/><path d="M1.500 4.500H10.500M1.500 7.500H10.500M4.500 1.500V10.500M7.500 1.500V10.500"/></svg>
<svg style="left:964px;top:595px" width="12" height="12" viewBox="0 0 12 12" fill="none" stroke="#555" stroke-width="1"><rect x="1.500" y="1.500" width="9" height="9"/><rect x="3.800" y="3.800" width="4.400" height="4.400"/></svg>
<svg style="left:992px;top:595px" width="12" height="12" viewBox="0 0 12 12" fill="none" stroke="#555" stroke-width="1"><rect x="1.500" y="1.500" width="9" height="9"/><path d="M4.500 1.500V6H8V1.500"/></svg>
<div style="left:1016px;top:601px;width:5px;height:1px;background:#666;"></div>
<div style="left:1026px;top:601px;width:71px;height:1px;background:#b5b5b5;"></div>
<div style="left:1060px;top:596px;width:3px;height:10px;background:#666;"></div>
<div style="left:1100px;top:601px;width:6px;height:1px;background:#666;"></div>
<div style="left:1102.5px;top:598.5px;width:1px;height:6px;background:#666;"></div>
<span class="t" style="left:1115.50px;top:598.09px;font-size:8.4px;font-weight:normal;color:#3c3c3c;font-family:'Liberation Sans',sans-serif;transform:scaleX(0.8636);-webkit-text-stroke:.15px currentColor;">100%</span>
<!-- taskbar -->
<div style="left:0px;top:609px;width:1140px;height:6px;background:#171717;"></div>
<div style="left:40px;top:609px;width:243px;height:6px;background:#3a3a3a;"></div>
<div style="left:283px;top:609px;width:142px;height:6px;background:#1d1d1d;"></div>
<div style="left:425px;top:609px;width:32px;height:6px;background:#4a4a4a;"></div>
<span class="t" style="left:1064.00px;top:611.38px;font-size:9px;font-weight:normal;color:#eee;font-family:'Liberation Sans',sans-serif;transform:scaleX(0.9245);">3:42 PM</span>
</div>
</body></html>
